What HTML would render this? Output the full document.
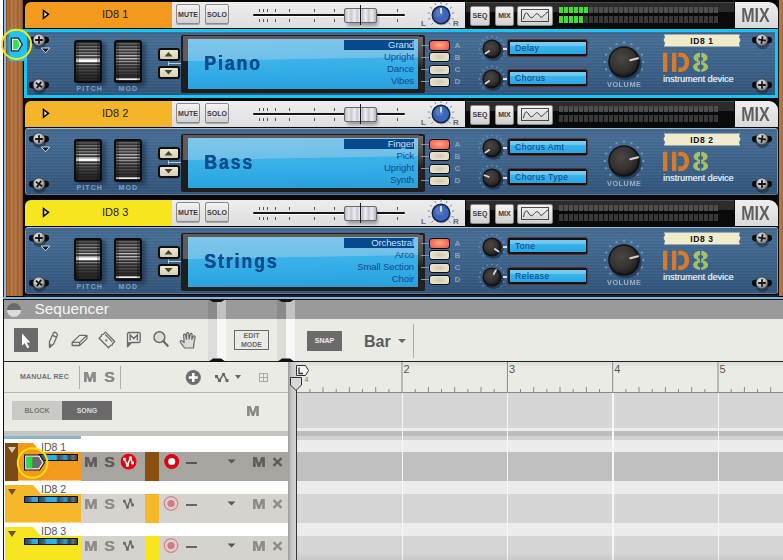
<!DOCTYPE html><html><head><meta charset="utf-8"><style>
*{margin:0;padding:0;box-sizing:border-box}
html,body{width:783px;height:560px;overflow:hidden;background:#000;font-family:"Liberation Sans",sans-serif}
.ab{position:absolute}
#root{position:relative;width:783px;height:560px;overflow:hidden;background:#070707}
.wood{background:linear-gradient(90deg,#8a5026 0%,#b07040 12%,#9c5e30 22%,#c08050 34%,#a46634 46%,#bc7c4a 58%,#9a5c2e 70%,#b87848 82%,#a06232 92%,#7a4622 100%)}
.tab{left:25px;width:147px;height:26px;border-radius:6px 0 0 0}
.tname{font-size:11px;color:#1c1c1c;left:102px;line-height:13px}
.gray{left:172px;width:293px;height:26px;background:linear-gradient(#eeeeee,#dedede)}
.btn{background:linear-gradient(#f4f4f4,#d0d0d0);border:1px solid #8a8a8a;border-radius:2px;font-size:7px;font-weight:bold;color:#3a3a3a;text-align:center;line-height:19.5px;box-shadow:0 1px 0 rgba(0,0,0,0.25)}
.dark{left:465px;width:270px;height:26px;background:#0a0a0a}
.mixtab{left:735px;width:43px;height:26px;background:linear-gradient(#eeeeee,#dadada);border-radius:0 9px 0 0}
.mixt{left:-1px;top:0;width:43px;font-size:20px;font-weight:bold;color:#5e5e5e;text-align:center;line-height:27px;transform:scaleX(0.8);transform-origin:21.5px 0}
.panel{left:25px;width:753px;background:linear-gradient(#42678d,#476d94 12%,#3e638a 50%,#33557a)}
.stripes{background:repeating-linear-gradient(180deg,rgba(255,255,255,0.03) 0 1px,rgba(0,0,0,0.045) 1px 2px,rgba(255,255,255,0.0) 2px 3px)}
.wlbl{font-size:7px;font-weight:bold;color:#78a2c4;letter-spacing:1.1px;line-height:8px}
.ud{width:22px;height:13px;background:linear-gradient(#eee8d2,#d8d0b6);border:2px solid #0e0e0e;border-radius:3px}
.lcdframe{background:#1e1e1e;border-radius:2px}
.lcd{background:linear-gradient(179deg,#80c6ea 0%,#6ec0e8 40%,#3cb2ea 41.5%,#2ea8e2 80%,#2a9ed8 100%)}
.pname{font-size:19.5px;font-weight:bold;color:#0c4c8c;letter-spacing:2.2px;text-shadow:0.7px 0 0 #0c4c8c;line-height:22px;transform:scaleX(0.9);transform-origin:0 0}
.plist{font-size:9.5px;color:#0e4a8e;text-align:right;line-height:12px;letter-spacing:-0.1px}
.abtn{width:20.5px;height:12px;background:radial-gradient(ellipse at 50% 50%,#cfc8b0,#e4dec8 60%,#ece6d2);border:1.6px solid #0e0e0e;border-radius:3px}
.albl{font-size:8px;font-weight:bold;color:#8aa2ba;line-height:9px}
.pdisp{width:81px;height:17.5px;background:#161010;border-radius:3px;border:1px solid #5a3432}
.pdin{left:2px;top:2px;width:75.5px;height:12px;background:linear-gradient(#7ccdf0,#6cc6ee 30%,#3ab4ec 34%,#2aa8e4);font-size:8.6px;color:#0a3c84;line-height:12px;padding-left:5px;letter-spacing:0.45px}
.tape{width:77px;height:12.5px;background:#efebcc}
.idev{font-size:9px;color:#d8e2ec;line-height:11px;letter-spacing:0;text-shadow:0.3px 0 0 #d8e2ec}
.trkM{font-size:14.3px;font-weight:bold;line-height:14px;text-shadow:0.4px 0 0 currentColor;transform:scaleX(1.12);transform-origin:0 0}
</style></head><body><div id="root">
<div class="ab" style="left:0;top:0;width:3px;height:560px;background:#fff"></div>
<div class="ab" style="left:3px;top:0;width:1px;height:298px;background:#1a2a44"></div>
<div class="ab" style="left:4px;top:0;width:2px;height:298px;background:#8db6da"></div>
<div class="ab wood" style="left:6px;top:0;width:17px;height:296px"></div>
<div class="ab" style="left:777px;top:0;width:2px;height:296px;background:#111"></div>
<div class="ab wood" style="left:779px;top:0;width:4px;height:296px"></div>
<div class="ab tab" style="top:2px;background:linear-gradient(#f39a1e,#f39a1e)"></div>
<svg class="ab" style="left:41px;top:8px" width="10" height="13"><path d="M2.5 2.5 L7.5 6.3 L2.5 10.3 Z" fill="#e8dcc8" stroke="#000" stroke-width="1.5" stroke-linejoin="miter"/></svg>
<div class="ab tname" style="top:8px">ID8 1</div>
<div class="ab gray" style="top:2px"></div>
<div class="ab btn" style="left:176px;top:4px;width:24px;height:20px">MUTE</div>
<div class="ab btn" style="left:205px;top:4px;width:24px;height:20px">SOLO</div>
<div class="ab" style="left:253px;top:14px;width:152px;height:2px;background:#161616;border-radius:1px"></div>
<div class="ab" style="left:254px;top:16px;width:151px;height:1px;background:#fff"></div>
<svg class="ab" style="left:253px;top:9px" width="160" height="14"><rect x="6.0" y="0" width="1" height="3" fill="#555"/><rect x="6.0" y="10" width="1" height="3" fill="#555"/><rect x="10.0" y="0" width="1" height="3" fill="#555"/><rect x="10.0" y="10" width="1" height="3" fill="#555"/><rect x="14.0" y="0" width="1" height="3" fill="#555"/><rect x="14.0" y="10" width="1" height="3" fill="#555"/><rect x="22.0" y="0" width="1" height="3" fill="#555"/><rect x="22.0" y="10" width="1" height="3" fill="#555"/><rect x="36.0" y="0" width="1" height="3" fill="#555"/><rect x="36.0" y="10" width="1" height="3" fill="#555"/><rect x="61.0" y="0" width="1" height="3" fill="#555"/><rect x="61.0" y="10" width="1" height="3" fill="#555"/><rect x="81.0" y="0" width="1" height="3" fill="#555"/><rect x="81.0" y="10" width="1" height="3" fill="#555"/><rect x="144.0" y="0" width="1" height="3" fill="#555"/><rect x="144.0" y="10" width="1" height="3" fill="#555"/></svg>
<div class="ab" style="left:347px;top:11px;width:31px;height:15px;background:rgba(0,0,0,0.3);filter:blur(1.5px);border-radius:3px"></div>
<div class="ab" style="left:344px;top:8px;width:33px;height:15px;border:1px solid #6a6a70;border-radius:2px;background:linear-gradient(90deg,#b8bac4,#e8e8ee 12%,#c4c6ce 20%,#f0f0f4 30%,#c8cad2 40%,#eeeef2 48%,#c0c2ca 56%,#f0f0f4 66%,#c6c8d0 76%,#ececf0 86%,#b4b6c0)"></div>
<div class="ab" style="left:360px;top:5px;width:1px;height:20px;background:#1a1a1a"></div>
<svg class="ab" style="left:426.5px;top:0.7px" width="28" height="28"><line x1="6.22" y1="21.78" x2="4.45" y2="23.55" stroke="#8a8a8a" stroke-width="1"/><line x1="3.54" y1="17.40" x2="1.16" y2="18.17" stroke="#8a8a8a" stroke-width="1"/><line x1="3.14" y1="12.28" x2="0.67" y2="11.89" stroke="#8a8a8a" stroke-width="1"/><line x1="5.10" y1="7.53" x2="3.08" y2="6.06" stroke="#8a8a8a" stroke-width="1"/><line x1="9.01" y1="4.20" x2="7.87" y2="1.97" stroke="#8a8a8a" stroke-width="1"/><line x1="14.00" y1="3.00" x2="14.00" y2="0.50" stroke="#8a8a8a" stroke-width="1"/><line x1="18.99" y1="4.20" x2="20.13" y2="1.97" stroke="#8a8a8a" stroke-width="1"/><line x1="22.90" y1="7.53" x2="24.92" y2="6.06" stroke="#8a8a8a" stroke-width="1"/><line x1="24.86" y1="12.28" x2="27.33" y2="11.89" stroke="#8a8a8a" stroke-width="1"/><line x1="24.46" y1="17.40" x2="26.84" y2="18.17" stroke="#8a8a8a" stroke-width="1"/><line x1="21.78" y1="21.78" x2="23.55" y2="23.55" stroke="#8a8a8a" stroke-width="1"/><circle cx="15" cy="15.5" r="9" fill="rgba(0,0,0,0.18)"/><circle cx="14" cy="14" r="8.7" fill="#3c66bc" stroke="#142448" stroke-width="1.5"/><circle cx="12.5" cy="12" r="4" fill="rgba(255,255,255,0.12)"/><line x1="14" y1="7" x2="14" y2="12.5" stroke="#f4f4f4" stroke-width="1.6"/></svg>
<div class="ab" style="left:421px;top:19px;font-size:8px;font-weight:bold;color:#666;line-height:9px">L</div>
<div class="ab" style="left:453px;top:19px;font-size:8px;font-weight:bold;color:#666;line-height:9px">R</div>
<div class="ab dark" style="top:2px"></div>
<div class="ab" style="left:466px;top:2px;width:268px;height:1px;background:#4a4a4a"></div>
<div class="ab" style="left:466px;top:3px;width:268px;height:9px;background:#2c2c2c"></div>
<div class="ab btn" style="left:470px;top:6px;width:20px;height:19.5px;line-height:18px">SEQ</div>
<div class="ab btn" style="left:495px;top:6px;width:19px;height:19.5px;line-height:18px">MIX</div>
<div class="ab btn" style="left:517px;top:6px;width:36px;height:20px"></div>
<svg class="ab" style="left:521px;top:9px" width="28" height="13"><rect x="0.5" y="0.5" width="27" height="12" fill="none" stroke="#4a4a4a"/><path d="M2.5 10 C4 3,5.5 2.5,7.5 6 S11 9.5,13.5 6.5 S17 4.5,19 7.5 S24 4,27 3" fill="none" stroke="#333" stroke-width="1"/></svg>
<svg class="ab" style="left:559px;top:7px" width="160" height="16"><rect x="0" y="0" width="4" height="6" fill="#3ee02c"/><rect x="0" y="9" width="4" height="7" fill="#3ee02c"/><rect x="5" y="0" width="4" height="6" fill="#3ee02c"/><rect x="5" y="9" width="4" height="7" fill="#3ee02c"/><rect x="10" y="0" width="4" height="6" fill="#3ee02c"/><rect x="10" y="9" width="4" height="7" fill="#3ee02c"/><rect x="15" y="0" width="4" height="6" fill="#3ee02c"/><rect x="15" y="9" width="4" height="7" fill="#3ee02c"/><rect x="20" y="0" width="4" height="6" fill="#3ee02c"/><rect x="20" y="9" width="4" height="7" fill="#3ee02c"/><rect x="25" y="0" width="4" height="6" fill="#3ee02c"/><rect x="25" y="9" width="4" height="7" fill="#383838"/><rect x="30" y="0" width="4" height="6" fill="#4e4e4e"/><rect x="30" y="9" width="4" height="7" fill="#383838"/><rect x="35" y="0" width="4" height="6" fill="#4e4e4e"/><rect x="35" y="9" width="4" height="7" fill="#383838"/><rect x="40" y="0" width="4" height="6" fill="#4e4e4e"/><rect x="40" y="9" width="4" height="7" fill="#383838"/><rect x="45" y="0" width="4" height="6" fill="#4e4e4e"/><rect x="45" y="9" width="4" height="7" fill="#383838"/><rect x="50" y="0" width="4" height="6" fill="#4e4e4e"/><rect x="50" y="9" width="4" height="7" fill="#383838"/><rect x="55" y="0" width="4" height="6" fill="#4e4e4e"/><rect x="55" y="9" width="4" height="7" fill="#383838"/><rect x="60" y="0" width="4" height="6" fill="#4e4e4e"/><rect x="60" y="9" width="4" height="7" fill="#383838"/><rect x="65" y="0" width="4" height="6" fill="#4e4e4e"/><rect x="65" y="9" width="4" height="7" fill="#383838"/><rect x="70" y="0" width="4" height="6" fill="#4e4e4e"/><rect x="70" y="9" width="4" height="7" fill="#383838"/><rect x="75" y="0" width="4" height="6" fill="#4e4e4e"/><rect x="75" y="9" width="4" height="7" fill="#383838"/><rect x="80" y="0" width="4" height="6" fill="#4e4e4e"/><rect x="80" y="9" width="4" height="7" fill="#383838"/><rect x="85" y="0" width="4" height="6" fill="#4e4e4e"/><rect x="85" y="9" width="4" height="7" fill="#383838"/><rect x="90" y="0" width="4" height="6" fill="#4e4e4e"/><rect x="90" y="9" width="4" height="7" fill="#383838"/><rect x="95" y="0" width="4" height="6" fill="#4e4e4e"/><rect x="95" y="9" width="4" height="7" fill="#383838"/><rect x="100" y="0" width="4" height="6" fill="#4e4e4e"/><rect x="100" y="9" width="4" height="7" fill="#383838"/><rect x="105" y="0" width="4" height="6" fill="#4e4e4e"/><rect x="105" y="9" width="4" height="7" fill="#383838"/><rect x="110" y="0" width="4" height="6" fill="#4e4e4e"/><rect x="110" y="9" width="4" height="7" fill="#383838"/><rect x="115" y="0" width="4" height="6" fill="#4e4e4e"/><rect x="115" y="9" width="4" height="7" fill="#383838"/><rect x="120" y="0" width="4" height="6" fill="#4e4e4e"/><rect x="120" y="9" width="4" height="7" fill="#383838"/><rect x="125" y="0" width="4" height="6" fill="#4e4e4e"/><rect x="125" y="9" width="4" height="7" fill="#383838"/><rect x="130" y="0" width="4" height="6" fill="#4e4e4e"/><rect x="130" y="9" width="4" height="7" fill="#383838"/><rect x="135" y="0" width="4" height="6" fill="#4e4e4e"/><rect x="135" y="9" width="4" height="7" fill="#383838"/><rect x="140" y="0" width="4" height="6" fill="#4e4e4e"/><rect x="140" y="9" width="4" height="7" fill="#383838"/><rect x="145" y="0" width="4" height="6" fill="#4e4e4e"/><rect x="145" y="9" width="4" height="7" fill="#383838"/><rect x="150" y="0" width="4" height="6" fill="#4e4e4e"/><rect x="150" y="9" width="4" height="7" fill="#383838"/><rect x="155" y="0" width="4" height="6" fill="#4e4e4e"/><rect x="155" y="9" width="4" height="7" fill="#383838"/></svg>
<div class="ab mixtab" style="top:2px"><div class="ab mixt">MIX</div></div>
<div class="ab panel" style="left:24px;top:29px;width:754px;height:69px;border:3px solid #16c6f4"></div>
<div class="ab stripes" style="left:27px;top:32px;width:748px;height:63px"></div>
<svg class="ab" style="left:28px;top:31px" width="22" height="20"><defs><radialGradient id="sg" cx="0.42" cy="0.38" r="0.65"><stop offset="0" stop-color="#f0f0f0"/><stop offset="0.55" stop-color="#b8b8b8"/><stop offset="1" stop-color="#606060"/></radialGradient></defs><ellipse cx="11.5" cy="12.5" rx="6.5" ry="5.5" fill="rgba(15,30,45,0.45)"/><rect x="1" y="5.8" width="20" height="6.6" rx="3.3" fill="#0c0c0c"/><circle cx="11" cy="9" r="6" fill="url(#sg)" stroke="#2a2a2a" stroke-width="0.6"/><g transform="rotate(0 11 9)"><path d="M11 5.2V12.8M7.2 9H14.8" stroke="#161616" stroke-width="1.8"/></g></svg>
<svg class="ab" style="left:28px;top:76px" width="22" height="20"><defs><radialGradient id="sg" cx="0.42" cy="0.38" r="0.65"><stop offset="0" stop-color="#f0f0f0"/><stop offset="0.55" stop-color="#b8b8b8"/><stop offset="1" stop-color="#606060"/></radialGradient></defs><ellipse cx="11.5" cy="12.5" rx="6.5" ry="5.5" fill="rgba(15,30,45,0.45)"/><rect x="1" y="5.8" width="20" height="6.6" rx="3.3" fill="#0c0c0c"/><circle cx="11" cy="9" r="6" fill="url(#sg)" stroke="#2a2a2a" stroke-width="0.6"/><g transform="rotate(35 11 9)"><path d="M11 5.2V12.8M7.2 9H14.8" stroke="#161616" stroke-width="1.8"/></g></svg>
<svg class="ab" style="left:751px;top:31px" width="22" height="20"><defs><radialGradient id="sg" cx="0.42" cy="0.38" r="0.65"><stop offset="0" stop-color="#f0f0f0"/><stop offset="0.55" stop-color="#b8b8b8"/><stop offset="1" stop-color="#606060"/></radialGradient></defs><ellipse cx="11.5" cy="12.5" rx="6.5" ry="5.5" fill="rgba(15,30,45,0.45)"/><rect x="1" y="5.8" width="20" height="6.6" rx="3.3" fill="#0c0c0c"/><circle cx="11" cy="9" r="6" fill="url(#sg)" stroke="#2a2a2a" stroke-width="0.6"/><g transform="rotate(10 11 9)"><path d="M11 5.2V12.8M7.2 9H14.8" stroke="#161616" stroke-width="1.8"/></g></svg>
<svg class="ab" style="left:751px;top:76px" width="22" height="20"><defs><radialGradient id="sg" cx="0.42" cy="0.38" r="0.65"><stop offset="0" stop-color="#f0f0f0"/><stop offset="0.55" stop-color="#b8b8b8"/><stop offset="1" stop-color="#606060"/></radialGradient></defs><ellipse cx="11.5" cy="12.5" rx="6.5" ry="5.5" fill="rgba(15,30,45,0.45)"/><rect x="1" y="5.8" width="20" height="6.6" rx="3.3" fill="#0c0c0c"/><circle cx="11" cy="9" r="6" fill="url(#sg)" stroke="#2a2a2a" stroke-width="0.6"/><g transform="rotate(0 11 9)"><path d="M11 5.2V12.8M7.2 9H14.8" stroke="#161616" stroke-width="1.8"/></g></svg>
<svg class="ab" style="left:40px;top:47px" width="11" height="7"><path d="M1.2 1H9.8L5.5 5.8Z" fill="#0e1a26" stroke="#dfe8f0" stroke-width="0.9"/></svg>
<div class="ab" style="left:77px;top:42px;width:29px;height:44px;background:rgba(10,25,45,0.45);filter:blur(2px);border-radius:3px"></div>
<svg class="ab" style="left:74px;top:40px" width="28" height="43"><rect x="0" y="0" width="28" height="43" rx="3" fill="#0c0c0c"/><rect x="2" y="2" width="24" height="1" fill="rgb(43,43,43)"/><rect x="2" y="3" width="24" height="1" fill="rgb(79,79,79)"/><rect x="2" y="4" width="24" height="1" fill="rgb(72,72,72)"/><rect x="2" y="5" width="24" height="1" fill="rgb(45,45,45)"/><rect x="2" y="6" width="24" height="1" fill="rgb(116,116,116)"/><rect x="2" y="7" width="24" height="1" fill="rgb(77,77,77)"/><rect x="2" y="8" width="24" height="1" fill="rgb(49,49,49)"/><rect x="2" y="9" width="24" height="1" fill="rgb(135,135,135)"/><rect x="2" y="10" width="24" height="1" fill="rgb(75,75,75)"/><rect x="2" y="11" width="24" height="1" fill="rgb(59,59,59)"/><rect x="2" y="12" width="24" height="1" fill="rgb(120,120,120)"/><rect x="2" y="13" width="24" height="1" fill="rgb(82,82,82)"/><rect x="2" y="14" width="24" height="1" fill="rgb(61,61,61)"/><rect x="2" y="15" width="24" height="1" fill="rgb(181,181,181)"/><rect x="2" y="16" width="24" height="1" fill="rgb(85,85,85)"/><rect x="2" y="17" width="24" height="1" fill="rgb(57,57,57)"/><rect x="2" y="18" width="24" height="1" fill="rgb(161,161,161)"/><rect x="2" y="19" width="24" height="1" fill="rgb(113,113,113)"/><rect x="2" y="20" width="24" height="1" fill="rgb(61,61,61)"/><rect x="2" y="21" width="24" height="1" fill="rgb(132,132,132)"/><rect x="2" y="22" width="24" height="1" fill="rgb(103,103,103)"/><rect x="2" y="23" width="24" height="1" fill="rgb(49,49,49)"/><rect x="2" y="24" width="24" height="1" fill="rgb(137,137,137)"/><rect x="2" y="25" width="24" height="1" fill="rgb(70,70,70)"/><rect x="2" y="26" width="24" height="1" fill="rgb(46,46,46)"/><rect x="2" y="27" width="24" height="1" fill="rgb(81,81,81)"/><rect x="2" y="28" width="24" height="1" fill="rgb(60,60,60)"/><rect x="2" y="29" width="24" height="1" fill="rgb(47,47,47)"/><rect x="2" y="30" width="24" height="1" fill="rgb(67,67,67)"/><rect x="2" y="31" width="24" height="1" fill="rgb(54,54,54)"/><rect x="2" y="32" width="24" height="1" fill="rgb(40,40,40)"/><rect x="2" y="33" width="24" height="1" fill="rgb(57,57,57)"/><rect x="2" y="34" width="24" height="1" fill="rgb(45,45,45)"/><rect x="2" y="35" width="24" height="1" fill="rgb(35,35,35)"/><rect x="2" y="36" width="24" height="1" fill="rgb(43,43,43)"/><rect x="2" y="37" width="24" height="1" fill="rgb(37,37,37)"/><rect x="2" y="38" width="24" height="1" fill="rgb(34,34,34)"/><rect x="2" y="39" width="24" height="1" fill="rgb(40,40,40)"/><rect x="2" y="40" width="24" height="1" fill="rgb(35,35,35)"/><rect x="2" y="19.3" width="24" height="2.7" fill="#fafafa"/><rect x="2" y="2" width="3" height="39" fill="rgba(0,0,0,0.25)"/><rect x="23" y="2" width="3" height="39" fill="rgba(0,0,0,0.25)"/></svg>
<div class="ab" style="left:117px;top:42px;width:29px;height:44px;background:rgba(10,25,45,0.45);filter:blur(2px);border-radius:3px"></div>
<svg class="ab" style="left:114px;top:40px" width="28" height="43"><rect x="0" y="0" width="28" height="43" rx="3" fill="#0c0c0c"/><rect x="2" y="2" width="24" height="1" fill="rgb(44,44,44)"/><rect x="2" y="3" width="24" height="1" fill="rgb(94,94,94)"/><rect x="2" y="4" width="24" height="1" fill="rgb(78,78,78)"/><rect x="2" y="5" width="24" height="1" fill="rgb(50,50,50)"/><rect x="2" y="6" width="24" height="1" fill="rgb(114,114,114)"/><rect x="2" y="7" width="24" height="1" fill="rgb(83,83,83)"/><rect x="2" y="8" width="24" height="1" fill="rgb(51,51,51)"/><rect x="2" y="9" width="24" height="1" fill="rgb(136,136,136)"/><rect x="2" y="10" width="24" height="1" fill="rgb(96,96,96)"/><rect x="2" y="11" width="24" height="1" fill="rgb(65,65,65)"/><rect x="2" y="12" width="24" height="1" fill="rgb(121,121,121)"/><rect x="2" y="13" width="24" height="1" fill="rgb(91,91,91)"/><rect x="2" y="14" width="24" height="1" fill="rgb(55,55,55)"/><rect x="2" y="15" width="24" height="1" fill="rgb(180,180,180)"/><rect x="2" y="16" width="24" height="1" fill="rgb(108,108,108)"/><rect x="2" y="17" width="24" height="1" fill="rgb(54,54,54)"/><rect x="2" y="18" width="24" height="1" fill="rgb(187,187,187)"/><rect x="2" y="19" width="24" height="1" fill="rgb(114,114,114)"/><rect x="2" y="20" width="24" height="1" fill="rgb(62,62,62)"/><rect x="2" y="21" width="24" height="1" fill="rgb(146,146,146)"/><rect x="2" y="22" width="24" height="1" fill="rgb(76,76,76)"/><rect x="2" y="23" width="24" height="1" fill="rgb(48,48,48)"/><rect x="2" y="24" width="24" height="1" fill="rgb(120,120,120)"/><rect x="2" y="25" width="24" height="1" fill="rgb(64,64,64)"/><rect x="2" y="26" width="24" height="1" fill="rgb(46,46,46)"/><rect x="2" y="27" width="24" height="1" fill="rgb(86,86,86)"/><rect x="2" y="28" width="24" height="1" fill="rgb(54,54,54)"/><rect x="2" y="29" width="24" height="1" fill="rgb(44,44,44)"/><rect x="2" y="30" width="24" height="1" fill="rgb(74,74,74)"/><rect x="2" y="31" width="24" height="1" fill="rgb(57,57,57)"/><rect x="2" y="32" width="24" height="1" fill="rgb(40,40,40)"/><rect x="2" y="33" width="24" height="1" fill="rgb(62,62,62)"/><rect x="2" y="34" width="24" height="1" fill="rgb(44,44,44)"/><rect x="2" y="35" width="24" height="1" fill="rgb(37,37,37)"/><rect x="2" y="36" width="24" height="1" fill="rgb(47,47,47)"/><rect x="2" y="37" width="24" height="1" fill="rgb(38,38,38)"/><rect x="2" y="38" width="24" height="1" fill="rgb(35,35,35)"/><rect x="2" y="39" width="24" height="1" fill="rgb(42,42,42)"/><rect x="2" y="40" width="24" height="1" fill="rgb(36,36,36)"/><rect x="2" y="38.3" width="24" height="1.7" fill="#eeeeee"/><rect x="2" y="2" width="3" height="39" fill="rgba(0,0,0,0.25)"/><rect x="23" y="2" width="3" height="39" fill="rgba(0,0,0,0.25)"/></svg>
<div class="ab wlbl" style="left:76.5px;top:85px">PITCH</div>
<div class="ab wlbl" style="left:118.5px;top:85px">MOD</div>
<div class="ab ud" style="left:157.5px;top:47.5px"></div>
<div class="ab ud" style="left:157.5px;top:65.5px"></div>
<svg class="ab" style="left:157px;top:47px" width="26" height="33"><path d="M7.5 9.5H15.5L11.5 5Z" fill="#4a4232"/><path d="M7.5 23H15.5L11.5 27.5Z" fill="#4a4232"/><path d="M11.5 14.5V18.5M11.5 16.5H25" stroke="#b8cce0" stroke-width="1"/></svg>
<div class="ab lcdframe" style="left:181px;top:34.5px;width:244px;height:58px"></div>
<div class="ab" style="left:182.5px;top:36px;width:236px;height:25px;background:#625a56"></div>
<div class="ab" style="left:418px;top:37px;width:5px;height:53px;background:linear-gradient(180deg,#6a6a6a,#444 40%,#222 60%)"></div>
<div class="ab lcd" style="left:188px;top:39px;width:230px;height:50px"></div>
<div class="ab pname" style="left:204px;top:51.5px">Piano</div>
<div class="ab" style="left:344px;top:40px;width:70px;height:10px;background:#08488e"></div>
<div class="ab plist" style="left:234px;width:180px;top:39.3px;color:#c4e2fc">Grand</div>
<div class="ab plist" style="left:234px;width:180px;top:51.25px;color:#0e4a8e">Upright</div>
<div class="ab plist" style="left:234px;width:180px;top:63.199999999999996px;color:#0e4a8e">Dance</div>
<div class="ab plist" style="left:234px;width:180px;top:75.14999999999999px;color:#0e4a8e">Vibes</div>
<div class="ab" style="left:421px;top:44.6px;width:8px;height:1px;background:#8a96a4"></div>
<div class="ab abtn" style="left:429px;top:39.5px;height:11.3px;background:radial-gradient(ellipse at 50% 45%,#ffb878 0,#ff8a70 30%,#f06a5a 70%,#d85848);"></div>
<div class="ab albl" style="left:454.5px;top:40.9px">A</div>
<div class="ab" style="left:421px;top:56.9px;width:8px;height:1px;background:#8a96a4"></div>
<div class="ab abtn" style="left:429px;top:52.3px;height:10.2px;"></div>
<div class="ab albl" style="left:454.5px;top:53.1px">B</div>
<div class="ab" style="left:421px;top:69.2px;width:8px;height:1px;background:#8a96a4"></div>
<div class="ab abtn" style="left:429px;top:64.6px;height:10.2px;"></div>
<div class="ab albl" style="left:454.5px;top:65.4px">C</div>
<div class="ab" style="left:421px;top:81.2px;width:8px;height:1px;background:#8a96a4"></div>
<div class="ab abtn" style="left:429px;top:76.6px;height:10.2px;"></div>
<div class="ab albl" style="left:454.5px;top:77.4px">D</div>
<svg class="ab" style="left:477.00px;top:33.60px" width="30" height="30"><defs><radialGradient id="kg" cx="0.42" cy="0.38" r="0.6"><stop offset="0" stop-color="#4a4642"/><stop offset="0.7" stop-color="#363230"/><stop offset="1" stop-color="#242220"/></radialGradient></defs><rect x="5.34" y="23.16" width="1.5" height="1.5" fill="#6690b8"/><rect x="2.61" y="19.07" width="1.5" height="1.5" fill="#6690b8"/><rect x="1.65" y="14.25" width="1.5" height="1.5" fill="#6690b8"/><rect x="2.61" y="9.43" width="1.5" height="1.5" fill="#6690b8"/><rect x="5.34" y="5.34" width="1.5" height="1.5" fill="#6690b8"/><rect x="9.43" y="2.61" width="1.5" height="1.5" fill="#6690b8"/><rect x="14.25" y="1.65" width="1.5" height="1.5" fill="#6690b8"/><rect x="19.07" y="2.61" width="1.5" height="1.5" fill="#6690b8"/><rect x="23.16" y="5.34" width="1.5" height="1.5" fill="#6690b8"/><rect x="25.89" y="9.43" width="1.5" height="1.5" fill="#6690b8"/><rect x="26.85" y="14.25" width="1.5" height="1.5" fill="#6690b8"/><rect x="25.89" y="19.07" width="1.5" height="1.5" fill="#6690b8"/><rect x="23.16" y="23.16" width="1.5" height="1.5" fill="#6690b8"/><circle cx="16.5" cy="17.0" r="10.1" fill="rgba(10,25,40,0.45)"/><circle cx="15.0" cy="15.0" r="9.6" fill="#121212"/><circle cx="14.7" cy="14.7" r="7.8" fill="url(#kg)"/><line x1="12.13" y1="17.01" x2="8.45" y2="19.59" stroke="#d4d4d4" stroke-width="1.8" stroke-linecap="round"/></svg>
<div class="ab" style="left:503px;top:48.1px;width:4px;height:1.5px;background:#dde"></div>
<div class="ab pdisp" style="left:507px;top:39px"><div class="ab pdin">Delay</div></div>
<svg class="ab" style="left:477.00px;top:63.50px" width="30" height="30"><defs><radialGradient id="kg" cx="0.42" cy="0.38" r="0.6"><stop offset="0" stop-color="#4a4642"/><stop offset="0.7" stop-color="#363230"/><stop offset="1" stop-color="#242220"/></radialGradient></defs><rect x="5.34" y="23.16" width="1.5" height="1.5" fill="#6690b8"/><rect x="2.61" y="19.07" width="1.5" height="1.5" fill="#6690b8"/><rect x="1.65" y="14.25" width="1.5" height="1.5" fill="#6690b8"/><rect x="2.61" y="9.43" width="1.5" height="1.5" fill="#6690b8"/><rect x="5.34" y="5.34" width="1.5" height="1.5" fill="#6690b8"/><rect x="9.43" y="2.61" width="1.5" height="1.5" fill="#6690b8"/><rect x="14.25" y="1.65" width="1.5" height="1.5" fill="#6690b8"/><rect x="19.07" y="2.61" width="1.5" height="1.5" fill="#6690b8"/><rect x="23.16" y="5.34" width="1.5" height="1.5" fill="#6690b8"/><rect x="25.89" y="9.43" width="1.5" height="1.5" fill="#6690b8"/><rect x="26.85" y="14.25" width="1.5" height="1.5" fill="#6690b8"/><rect x="25.89" y="19.07" width="1.5" height="1.5" fill="#6690b8"/><rect x="23.16" y="23.16" width="1.5" height="1.5" fill="#6690b8"/><circle cx="16.5" cy="17.0" r="10.1" fill="rgba(10,25,40,0.45)"/><circle cx="15.0" cy="15.0" r="9.6" fill="#121212"/><circle cx="14.7" cy="14.7" r="7.8" fill="url(#kg)"/><line x1="12.13" y1="17.01" x2="8.45" y2="19.59" stroke="#d4d4d4" stroke-width="1.8" stroke-linecap="round"/></svg>
<div class="ab" style="left:503px;top:78.0px;width:4px;height:1.5px;background:#dde"></div>
<div class="ab pdisp" style="left:507px;top:69px"><div class="ab pdin">Chorus</div></div>
<svg class="ab" style="left:601.20px;top:39.00px" width="46" height="46"><defs><radialGradient id="kg" cx="0.42" cy="0.38" r="0.6"><stop offset="0" stop-color="#4a4642"/><stop offset="0.7" stop-color="#363230"/><stop offset="1" stop-color="#242220"/></radialGradient></defs><rect x="8.35" y="35.65" width="2" height="2" fill="#6a9cc4"/><rect x="4.17" y="29.39" width="2" height="2" fill="#6a9cc4"/><rect x="2.70" y="22.00" width="2" height="2" fill="#6a9cc4"/><rect x="4.17" y="14.61" width="2" height="2" fill="#6a9cc4"/><rect x="8.35" y="8.35" width="2" height="2" fill="#6a9cc4"/><rect x="14.61" y="4.17" width="2" height="2" fill="#6a9cc4"/><rect x="22.00" y="2.70" width="2" height="2" fill="#6a9cc4"/><rect x="29.39" y="4.17" width="2" height="2" fill="#6a9cc4"/><rect x="35.65" y="8.35" width="2" height="2" fill="#6a9cc4"/><rect x="39.83" y="14.61" width="2" height="2" fill="#6a9cc4"/><rect x="41.30" y="22.00" width="2" height="2" fill="#6a9cc4"/><rect x="39.83" y="29.39" width="2" height="2" fill="#6a9cc4"/><rect x="35.65" y="35.65" width="2" height="2" fill="#6a9cc4"/><circle cx="24.5" cy="25.0" r="16.3" fill="rgba(10,25,40,0.45)"/><circle cx="23.0" cy="23.0" r="15.8" fill="#121212"/><circle cx="22.7" cy="22.7" r="14.0" fill="url(#kg)"/><line x1="29.28" y1="21.32" x2="37.01" y2="19.25" stroke="#d4d4d4" stroke-width="2" stroke-linecap="round"/></svg>
<div class="ab" style="left:607px;top:80.5px;font-size:7.5px;font-weight:bold;color:#9ab0c6;letter-spacing:0.5px;line-height:8px;transform:scaleX(0.98);transform-origin:0 0">VOLUME</div>
<svg class="ab" style="left:663px;top:34px" width="78" height="13"><path d="M1 0.5H77L76 3L77.5 6L76 9.5L77 12.5H1L2 9L0.5 6L2 3Z" fill="#efebcb"/><text x="39" y="10" text-anchor="middle" font-family="Liberation Sans" font-weight="bold" font-size="8.5" fill="#111" letter-spacing="0.6">ID8 1</text></svg>
<svg class="ab" style="left:662px;top:52px" width="48" height="22"><rect x="1" y="0.7" width="4.3" height="19.2" fill="#d97a2a"/><rect x="10" y="0.7" width="4.3" height="19.2" fill="#d97a2a"/><path d="M16.3 0.7H19.5A7.7 9.6 0 0 1 19.5 19.9H16.3V15.6H19.3A3.4 5.3 0 0 0 19.3 5H16.3Z" fill="#d97a2a"/><path fill-rule="evenodd" d="M31.5 5.6A7.1 4.9 0 1 0 45.7 5.6A7.1 4.9 0 1 0 31.5 5.6Z M36 7A2.6 2.1 0 1 0 41.2 7A2.6 2.1 0 1 0 36 7Z" fill="#a6c064"/><path fill-rule="evenodd" d="M31.1 15A7.5 4.9 0 1 0 46.1 15A7.5 4.9 0 1 0 31.1 15Z M35.6 15A3 2.4 0 1 0 41.6 15A3 2.4 0 1 0 35.6 15Z" fill="#a6c064"/><rect x="38" y="0" width="1.2" height="21" fill="#3a5f86"/></svg>
<div class="ab idev" style="left:663px;top:73.5px">instrument device</div>
<div class="ab tab" style="top:101px;background:linear-gradient(#f5b52b,#f5b52b)"></div>
<svg class="ab" style="left:41px;top:107px" width="10" height="13"><path d="M2.5 2.5 L7.5 6.3 L2.5 10.3 Z" fill="#e8dcc8" stroke="#000" stroke-width="1.5" stroke-linejoin="miter"/></svg>
<div class="ab tname" style="top:107px">ID8 2</div>
<div class="ab gray" style="top:101px"></div>
<div class="ab btn" style="left:176px;top:103px;width:24px;height:20px">MUTE</div>
<div class="ab btn" style="left:205px;top:103px;width:24px;height:20px">SOLO</div>
<div class="ab" style="left:253px;top:113px;width:152px;height:2px;background:#161616;border-radius:1px"></div>
<div class="ab" style="left:254px;top:115px;width:151px;height:1px;background:#fff"></div>
<svg class="ab" style="left:253px;top:108px" width="160" height="14"><rect x="6.0" y="0" width="1" height="3" fill="#555"/><rect x="6.0" y="10" width="1" height="3" fill="#555"/><rect x="10.0" y="0" width="1" height="3" fill="#555"/><rect x="10.0" y="10" width="1" height="3" fill="#555"/><rect x="14.0" y="0" width="1" height="3" fill="#555"/><rect x="14.0" y="10" width="1" height="3" fill="#555"/><rect x="22.0" y="0" width="1" height="3" fill="#555"/><rect x="22.0" y="10" width="1" height="3" fill="#555"/><rect x="36.0" y="0" width="1" height="3" fill="#555"/><rect x="36.0" y="10" width="1" height="3" fill="#555"/><rect x="61.0" y="0" width="1" height="3" fill="#555"/><rect x="61.0" y="10" width="1" height="3" fill="#555"/><rect x="81.0" y="0" width="1" height="3" fill="#555"/><rect x="81.0" y="10" width="1" height="3" fill="#555"/><rect x="144.0" y="0" width="1" height="3" fill="#555"/><rect x="144.0" y="10" width="1" height="3" fill="#555"/></svg>
<div class="ab" style="left:347px;top:110px;width:31px;height:15px;background:rgba(0,0,0,0.3);filter:blur(1.5px);border-radius:3px"></div>
<div class="ab" style="left:344px;top:107px;width:33px;height:15px;border:1px solid #6a6a70;border-radius:2px;background:linear-gradient(90deg,#b8bac4,#e8e8ee 12%,#c4c6ce 20%,#f0f0f4 30%,#c8cad2 40%,#eeeef2 48%,#c0c2ca 56%,#f0f0f4 66%,#c6c8d0 76%,#ececf0 86%,#b4b6c0)"></div>
<div class="ab" style="left:360px;top:104px;width:1px;height:20px;background:#1a1a1a"></div>
<svg class="ab" style="left:426.5px;top:99.7px" width="28" height="28"><line x1="6.22" y1="21.78" x2="4.45" y2="23.55" stroke="#8a8a8a" stroke-width="1"/><line x1="3.54" y1="17.40" x2="1.16" y2="18.17" stroke="#8a8a8a" stroke-width="1"/><line x1="3.14" y1="12.28" x2="0.67" y2="11.89" stroke="#8a8a8a" stroke-width="1"/><line x1="5.10" y1="7.53" x2="3.08" y2="6.06" stroke="#8a8a8a" stroke-width="1"/><line x1="9.01" y1="4.20" x2="7.87" y2="1.97" stroke="#8a8a8a" stroke-width="1"/><line x1="14.00" y1="3.00" x2="14.00" y2="0.50" stroke="#8a8a8a" stroke-width="1"/><line x1="18.99" y1="4.20" x2="20.13" y2="1.97" stroke="#8a8a8a" stroke-width="1"/><line x1="22.90" y1="7.53" x2="24.92" y2="6.06" stroke="#8a8a8a" stroke-width="1"/><line x1="24.86" y1="12.28" x2="27.33" y2="11.89" stroke="#8a8a8a" stroke-width="1"/><line x1="24.46" y1="17.40" x2="26.84" y2="18.17" stroke="#8a8a8a" stroke-width="1"/><line x1="21.78" y1="21.78" x2="23.55" y2="23.55" stroke="#8a8a8a" stroke-width="1"/><circle cx="15" cy="15.5" r="9" fill="rgba(0,0,0,0.18)"/><circle cx="14" cy="14" r="8.7" fill="#3c66bc" stroke="#142448" stroke-width="1.5"/><circle cx="12.5" cy="12" r="4" fill="rgba(255,255,255,0.12)"/><line x1="14" y1="7" x2="14" y2="12.5" stroke="#f4f4f4" stroke-width="1.6"/></svg>
<div class="ab" style="left:421px;top:118px;font-size:8px;font-weight:bold;color:#666;line-height:9px">L</div>
<div class="ab" style="left:453px;top:118px;font-size:8px;font-weight:bold;color:#666;line-height:9px">R</div>
<div class="ab dark" style="top:101px"></div>
<div class="ab" style="left:466px;top:101px;width:268px;height:1px;background:#4a4a4a"></div>
<div class="ab" style="left:466px;top:102px;width:268px;height:9px;background:#2c2c2c"></div>
<div class="ab btn" style="left:470px;top:105px;width:20px;height:19.5px;line-height:18px">SEQ</div>
<div class="ab btn" style="left:495px;top:105px;width:19px;height:19.5px;line-height:18px">MIX</div>
<div class="ab btn" style="left:517px;top:105px;width:36px;height:20px"></div>
<svg class="ab" style="left:521px;top:108px" width="28" height="13"><rect x="0.5" y="0.5" width="27" height="12" fill="none" stroke="#4a4a4a"/><path d="M2.5 10 C4 3,5.5 2.5,7.5 6 S11 9.5,13.5 6.5 S17 4.5,19 7.5 S24 4,27 3" fill="none" stroke="#333" stroke-width="1"/></svg>
<svg class="ab" style="left:559px;top:106px" width="160" height="16"><rect x="0" y="0" width="4" height="6" fill="#4e4e4e"/><rect x="0" y="9" width="4" height="7" fill="#383838"/><rect x="5" y="0" width="4" height="6" fill="#4e4e4e"/><rect x="5" y="9" width="4" height="7" fill="#383838"/><rect x="10" y="0" width="4" height="6" fill="#4e4e4e"/><rect x="10" y="9" width="4" height="7" fill="#383838"/><rect x="15" y="0" width="4" height="6" fill="#4e4e4e"/><rect x="15" y="9" width="4" height="7" fill="#383838"/><rect x="20" y="0" width="4" height="6" fill="#4e4e4e"/><rect x="20" y="9" width="4" height="7" fill="#383838"/><rect x="25" y="0" width="4" height="6" fill="#4e4e4e"/><rect x="25" y="9" width="4" height="7" fill="#383838"/><rect x="30" y="0" width="4" height="6" fill="#4e4e4e"/><rect x="30" y="9" width="4" height="7" fill="#383838"/><rect x="35" y="0" width="4" height="6" fill="#4e4e4e"/><rect x="35" y="9" width="4" height="7" fill="#383838"/><rect x="40" y="0" width="4" height="6" fill="#4e4e4e"/><rect x="40" y="9" width="4" height="7" fill="#383838"/><rect x="45" y="0" width="4" height="6" fill="#4e4e4e"/><rect x="45" y="9" width="4" height="7" fill="#383838"/><rect x="50" y="0" width="4" height="6" fill="#4e4e4e"/><rect x="50" y="9" width="4" height="7" fill="#383838"/><rect x="55" y="0" width="4" height="6" fill="#4e4e4e"/><rect x="55" y="9" width="4" height="7" fill="#383838"/><rect x="60" y="0" width="4" height="6" fill="#4e4e4e"/><rect x="60" y="9" width="4" height="7" fill="#383838"/><rect x="65" y="0" width="4" height="6" fill="#4e4e4e"/><rect x="65" y="9" width="4" height="7" fill="#383838"/><rect x="70" y="0" width="4" height="6" fill="#4e4e4e"/><rect x="70" y="9" width="4" height="7" fill="#383838"/><rect x="75" y="0" width="4" height="6" fill="#4e4e4e"/><rect x="75" y="9" width="4" height="7" fill="#383838"/><rect x="80" y="0" width="4" height="6" fill="#4e4e4e"/><rect x="80" y="9" width="4" height="7" fill="#383838"/><rect x="85" y="0" width="4" height="6" fill="#4e4e4e"/><rect x="85" y="9" width="4" height="7" fill="#383838"/><rect x="90" y="0" width="4" height="6" fill="#4e4e4e"/><rect x="90" y="9" width="4" height="7" fill="#383838"/><rect x="95" y="0" width="4" height="6" fill="#4e4e4e"/><rect x="95" y="9" width="4" height="7" fill="#383838"/><rect x="100" y="0" width="4" height="6" fill="#4e4e4e"/><rect x="100" y="9" width="4" height="7" fill="#383838"/><rect x="105" y="0" width="4" height="6" fill="#4e4e4e"/><rect x="105" y="9" width="4" height="7" fill="#383838"/><rect x="110" y="0" width="4" height="6" fill="#4e4e4e"/><rect x="110" y="9" width="4" height="7" fill="#383838"/><rect x="115" y="0" width="4" height="6" fill="#4e4e4e"/><rect x="115" y="9" width="4" height="7" fill="#383838"/><rect x="120" y="0" width="4" height="6" fill="#4e4e4e"/><rect x="120" y="9" width="4" height="7" fill="#383838"/><rect x="125" y="0" width="4" height="6" fill="#4e4e4e"/><rect x="125" y="9" width="4" height="7" fill="#383838"/><rect x="130" y="0" width="4" height="6" fill="#4e4e4e"/><rect x="130" y="9" width="4" height="7" fill="#383838"/><rect x="135" y="0" width="4" height="6" fill="#4e4e4e"/><rect x="135" y="9" width="4" height="7" fill="#383838"/><rect x="140" y="0" width="4" height="6" fill="#4e4e4e"/><rect x="140" y="9" width="4" height="7" fill="#383838"/><rect x="145" y="0" width="4" height="6" fill="#4e4e4e"/><rect x="145" y="9" width="4" height="7" fill="#383838"/><rect x="150" y="0" width="4" height="6" fill="#4e4e4e"/><rect x="150" y="9" width="4" height="7" fill="#383838"/><rect x="155" y="0" width="4" height="6" fill="#4e4e4e"/><rect x="155" y="9" width="4" height="7" fill="#383838"/></svg>
<div class="ab mixtab" style="top:101px"><div class="ab mixt">MIX</div></div>
<div class="ab panel" style="top:128.3px;height:67.2px;border:1px solid #7894ac;border-top-color:#a4bacc;border-bottom-color:#62788e;border-radius:3px"></div>
<div class="ab stripes" style="left:26px;top:129.3px;width:751px;height:65.2px"></div>
<svg class="ab" style="left:28px;top:130px" width="22" height="20"><defs><radialGradient id="sg" cx="0.42" cy="0.38" r="0.65"><stop offset="0" stop-color="#f0f0f0"/><stop offset="0.55" stop-color="#b8b8b8"/><stop offset="1" stop-color="#606060"/></radialGradient></defs><ellipse cx="11.5" cy="12.5" rx="6.5" ry="5.5" fill="rgba(15,30,45,0.45)"/><rect x="1" y="5.8" width="20" height="6.6" rx="3.3" fill="#0c0c0c"/><circle cx="11" cy="9" r="6" fill="url(#sg)" stroke="#2a2a2a" stroke-width="0.6"/><g transform="rotate(0 11 9)"><path d="M11 5.2V12.8M7.2 9H14.8" stroke="#161616" stroke-width="1.8"/></g></svg>
<svg class="ab" style="left:28px;top:175px" width="22" height="20"><defs><radialGradient id="sg" cx="0.42" cy="0.38" r="0.65"><stop offset="0" stop-color="#f0f0f0"/><stop offset="0.55" stop-color="#b8b8b8"/><stop offset="1" stop-color="#606060"/></radialGradient></defs><ellipse cx="11.5" cy="12.5" rx="6.5" ry="5.5" fill="rgba(15,30,45,0.45)"/><rect x="1" y="5.8" width="20" height="6.6" rx="3.3" fill="#0c0c0c"/><circle cx="11" cy="9" r="6" fill="url(#sg)" stroke="#2a2a2a" stroke-width="0.6"/><g transform="rotate(35 11 9)"><path d="M11 5.2V12.8M7.2 9H14.8" stroke="#161616" stroke-width="1.8"/></g></svg>
<svg class="ab" style="left:751px;top:130px" width="22" height="20"><defs><radialGradient id="sg" cx="0.42" cy="0.38" r="0.65"><stop offset="0" stop-color="#f0f0f0"/><stop offset="0.55" stop-color="#b8b8b8"/><stop offset="1" stop-color="#606060"/></radialGradient></defs><ellipse cx="11.5" cy="12.5" rx="6.5" ry="5.5" fill="rgba(15,30,45,0.45)"/><rect x="1" y="5.8" width="20" height="6.6" rx="3.3" fill="#0c0c0c"/><circle cx="11" cy="9" r="6" fill="url(#sg)" stroke="#2a2a2a" stroke-width="0.6"/><g transform="rotate(10 11 9)"><path d="M11 5.2V12.8M7.2 9H14.8" stroke="#161616" stroke-width="1.8"/></g></svg>
<svg class="ab" style="left:751px;top:175px" width="22" height="20"><defs><radialGradient id="sg" cx="0.42" cy="0.38" r="0.65"><stop offset="0" stop-color="#f0f0f0"/><stop offset="0.55" stop-color="#b8b8b8"/><stop offset="1" stop-color="#606060"/></radialGradient></defs><ellipse cx="11.5" cy="12.5" rx="6.5" ry="5.5" fill="rgba(15,30,45,0.45)"/><rect x="1" y="5.8" width="20" height="6.6" rx="3.3" fill="#0c0c0c"/><circle cx="11" cy="9" r="6" fill="url(#sg)" stroke="#2a2a2a" stroke-width="0.6"/><g transform="rotate(0 11 9)"><path d="M11 5.2V12.8M7.2 9H14.8" stroke="#161616" stroke-width="1.8"/></g></svg>
<svg class="ab" style="left:40px;top:146px" width="11" height="7"><path d="M1.2 1H9.8L5.5 5.8Z" fill="#0e1a26" stroke="#dfe8f0" stroke-width="0.9"/></svg>
<div class="ab" style="left:77px;top:141px;width:29px;height:44px;background:rgba(10,25,45,0.45);filter:blur(2px);border-radius:3px"></div>
<svg class="ab" style="left:74px;top:139px" width="28" height="43"><rect x="0" y="0" width="28" height="43" rx="3" fill="#0c0c0c"/><rect x="2" y="2" width="24" height="1" fill="rgb(43,43,43)"/><rect x="2" y="3" width="24" height="1" fill="rgb(79,79,79)"/><rect x="2" y="4" width="24" height="1" fill="rgb(72,72,72)"/><rect x="2" y="5" width="24" height="1" fill="rgb(45,45,45)"/><rect x="2" y="6" width="24" height="1" fill="rgb(116,116,116)"/><rect x="2" y="7" width="24" height="1" fill="rgb(77,77,77)"/><rect x="2" y="8" width="24" height="1" fill="rgb(49,49,49)"/><rect x="2" y="9" width="24" height="1" fill="rgb(135,135,135)"/><rect x="2" y="10" width="24" height="1" fill="rgb(75,75,75)"/><rect x="2" y="11" width="24" height="1" fill="rgb(59,59,59)"/><rect x="2" y="12" width="24" height="1" fill="rgb(120,120,120)"/><rect x="2" y="13" width="24" height="1" fill="rgb(82,82,82)"/><rect x="2" y="14" width="24" height="1" fill="rgb(61,61,61)"/><rect x="2" y="15" width="24" height="1" fill="rgb(181,181,181)"/><rect x="2" y="16" width="24" height="1" fill="rgb(85,85,85)"/><rect x="2" y="17" width="24" height="1" fill="rgb(57,57,57)"/><rect x="2" y="18" width="24" height="1" fill="rgb(161,161,161)"/><rect x="2" y="19" width="24" height="1" fill="rgb(113,113,113)"/><rect x="2" y="20" width="24" height="1" fill="rgb(61,61,61)"/><rect x="2" y="21" width="24" height="1" fill="rgb(132,132,132)"/><rect x="2" y="22" width="24" height="1" fill="rgb(103,103,103)"/><rect x="2" y="23" width="24" height="1" fill="rgb(49,49,49)"/><rect x="2" y="24" width="24" height="1" fill="rgb(137,137,137)"/><rect x="2" y="25" width="24" height="1" fill="rgb(70,70,70)"/><rect x="2" y="26" width="24" height="1" fill="rgb(46,46,46)"/><rect x="2" y="27" width="24" height="1" fill="rgb(81,81,81)"/><rect x="2" y="28" width="24" height="1" fill="rgb(60,60,60)"/><rect x="2" y="29" width="24" height="1" fill="rgb(47,47,47)"/><rect x="2" y="30" width="24" height="1" fill="rgb(67,67,67)"/><rect x="2" y="31" width="24" height="1" fill="rgb(54,54,54)"/><rect x="2" y="32" width="24" height="1" fill="rgb(40,40,40)"/><rect x="2" y="33" width="24" height="1" fill="rgb(57,57,57)"/><rect x="2" y="34" width="24" height="1" fill="rgb(45,45,45)"/><rect x="2" y="35" width="24" height="1" fill="rgb(35,35,35)"/><rect x="2" y="36" width="24" height="1" fill="rgb(43,43,43)"/><rect x="2" y="37" width="24" height="1" fill="rgb(37,37,37)"/><rect x="2" y="38" width="24" height="1" fill="rgb(34,34,34)"/><rect x="2" y="39" width="24" height="1" fill="rgb(40,40,40)"/><rect x="2" y="40" width="24" height="1" fill="rgb(35,35,35)"/><rect x="2" y="19.3" width="24" height="2.7" fill="#fafafa"/><rect x="2" y="2" width="3" height="39" fill="rgba(0,0,0,0.25)"/><rect x="23" y="2" width="3" height="39" fill="rgba(0,0,0,0.25)"/></svg>
<div class="ab" style="left:117px;top:141px;width:29px;height:44px;background:rgba(10,25,45,0.45);filter:blur(2px);border-radius:3px"></div>
<svg class="ab" style="left:114px;top:139px" width="28" height="43"><rect x="0" y="0" width="28" height="43" rx="3" fill="#0c0c0c"/><rect x="2" y="2" width="24" height="1" fill="rgb(44,44,44)"/><rect x="2" y="3" width="24" height="1" fill="rgb(94,94,94)"/><rect x="2" y="4" width="24" height="1" fill="rgb(78,78,78)"/><rect x="2" y="5" width="24" height="1" fill="rgb(50,50,50)"/><rect x="2" y="6" width="24" height="1" fill="rgb(114,114,114)"/><rect x="2" y="7" width="24" height="1" fill="rgb(83,83,83)"/><rect x="2" y="8" width="24" height="1" fill="rgb(51,51,51)"/><rect x="2" y="9" width="24" height="1" fill="rgb(136,136,136)"/><rect x="2" y="10" width="24" height="1" fill="rgb(96,96,96)"/><rect x="2" y="11" width="24" height="1" fill="rgb(65,65,65)"/><rect x="2" y="12" width="24" height="1" fill="rgb(121,121,121)"/><rect x="2" y="13" width="24" height="1" fill="rgb(91,91,91)"/><rect x="2" y="14" width="24" height="1" fill="rgb(55,55,55)"/><rect x="2" y="15" width="24" height="1" fill="rgb(180,180,180)"/><rect x="2" y="16" width="24" height="1" fill="rgb(108,108,108)"/><rect x="2" y="17" width="24" height="1" fill="rgb(54,54,54)"/><rect x="2" y="18" width="24" height="1" fill="rgb(187,187,187)"/><rect x="2" y="19" width="24" height="1" fill="rgb(114,114,114)"/><rect x="2" y="20" width="24" height="1" fill="rgb(62,62,62)"/><rect x="2" y="21" width="24" height="1" fill="rgb(146,146,146)"/><rect x="2" y="22" width="24" height="1" fill="rgb(76,76,76)"/><rect x="2" y="23" width="24" height="1" fill="rgb(48,48,48)"/><rect x="2" y="24" width="24" height="1" fill="rgb(120,120,120)"/><rect x="2" y="25" width="24" height="1" fill="rgb(64,64,64)"/><rect x="2" y="26" width="24" height="1" fill="rgb(46,46,46)"/><rect x="2" y="27" width="24" height="1" fill="rgb(86,86,86)"/><rect x="2" y="28" width="24" height="1" fill="rgb(54,54,54)"/><rect x="2" y="29" width="24" height="1" fill="rgb(44,44,44)"/><rect x="2" y="30" width="24" height="1" fill="rgb(74,74,74)"/><rect x="2" y="31" width="24" height="1" fill="rgb(57,57,57)"/><rect x="2" y="32" width="24" height="1" fill="rgb(40,40,40)"/><rect x="2" y="33" width="24" height="1" fill="rgb(62,62,62)"/><rect x="2" y="34" width="24" height="1" fill="rgb(44,44,44)"/><rect x="2" y="35" width="24" height="1" fill="rgb(37,37,37)"/><rect x="2" y="36" width="24" height="1" fill="rgb(47,47,47)"/><rect x="2" y="37" width="24" height="1" fill="rgb(38,38,38)"/><rect x="2" y="38" width="24" height="1" fill="rgb(35,35,35)"/><rect x="2" y="39" width="24" height="1" fill="rgb(42,42,42)"/><rect x="2" y="40" width="24" height="1" fill="rgb(36,36,36)"/><rect x="2" y="38.3" width="24" height="1.7" fill="#eeeeee"/><rect x="2" y="2" width="3" height="39" fill="rgba(0,0,0,0.25)"/><rect x="23" y="2" width="3" height="39" fill="rgba(0,0,0,0.25)"/></svg>
<div class="ab wlbl" style="left:76.5px;top:184px">PITCH</div>
<div class="ab wlbl" style="left:118.5px;top:184px">MOD</div>
<div class="ab ud" style="left:157.5px;top:146.5px"></div>
<div class="ab ud" style="left:157.5px;top:164.5px"></div>
<svg class="ab" style="left:157px;top:146px" width="26" height="33"><path d="M7.5 9.5H15.5L11.5 5Z" fill="#4a4232"/><path d="M7.5 23H15.5L11.5 27.5Z" fill="#4a4232"/><path d="M11.5 14.5V18.5M11.5 16.5H25" stroke="#b8cce0" stroke-width="1"/></svg>
<div class="ab lcdframe" style="left:181px;top:133.5px;width:244px;height:58px"></div>
<div class="ab" style="left:182.5px;top:135px;width:236px;height:25px;background:#625a56"></div>
<div class="ab" style="left:418px;top:136px;width:5px;height:53px;background:linear-gradient(180deg,#6a6a6a,#444 40%,#222 60%)"></div>
<div class="ab lcd" style="left:188px;top:138px;width:230px;height:50px"></div>
<div class="ab pname" style="left:204px;top:150.5px">Bass</div>
<div class="ab" style="left:344px;top:139px;width:70px;height:10px;background:#08488e"></div>
<div class="ab plist" style="left:234px;width:180px;top:138.3px;color:#c4e2fc">Finger</div>
<div class="ab plist" style="left:234px;width:180px;top:150.25px;color:#0e4a8e">Pick</div>
<div class="ab plist" style="left:234px;width:180px;top:162.20000000000002px;color:#0e4a8e">Upright</div>
<div class="ab plist" style="left:234px;width:180px;top:174.15px;color:#0e4a8e">Synth</div>
<div class="ab" style="left:421px;top:143.7px;width:8px;height:1px;background:#8a96a4"></div>
<div class="ab abtn" style="left:429px;top:138.5px;height:11.3px;background:radial-gradient(ellipse at 50% 45%,#ffb878 0,#ff8a70 30%,#f06a5a 70%,#d85848);"></div>
<div class="ab albl" style="left:454.5px;top:139.8px">A</div>
<div class="ab" style="left:421px;top:155.9px;width:8px;height:1px;background:#8a96a4"></div>
<div class="ab abtn" style="left:429px;top:151.3px;height:10.2px;"></div>
<div class="ab albl" style="left:454.5px;top:152.1px">B</div>
<div class="ab" style="left:421px;top:168.2px;width:8px;height:1px;background:#8a96a4"></div>
<div class="ab abtn" style="left:429px;top:163.6px;height:10.2px;"></div>
<div class="ab albl" style="left:454.5px;top:164.4px">C</div>
<div class="ab" style="left:421px;top:180.2px;width:8px;height:1px;background:#8a96a4"></div>
<div class="ab abtn" style="left:429px;top:175.6px;height:10.2px;"></div>
<div class="ab albl" style="left:454.5px;top:176.4px">D</div>
<svg class="ab" style="left:477.00px;top:132.60px" width="30" height="30"><defs><radialGradient id="kg" cx="0.42" cy="0.38" r="0.6"><stop offset="0" stop-color="#4a4642"/><stop offset="0.7" stop-color="#363230"/><stop offset="1" stop-color="#242220"/></radialGradient></defs><rect x="5.34" y="23.16" width="1.5" height="1.5" fill="#6690b8"/><rect x="2.61" y="19.07" width="1.5" height="1.5" fill="#6690b8"/><rect x="1.65" y="14.25" width="1.5" height="1.5" fill="#6690b8"/><rect x="2.61" y="9.43" width="1.5" height="1.5" fill="#6690b8"/><rect x="5.34" y="5.34" width="1.5" height="1.5" fill="#6690b8"/><rect x="9.43" y="2.61" width="1.5" height="1.5" fill="#6690b8"/><rect x="14.25" y="1.65" width="1.5" height="1.5" fill="#6690b8"/><rect x="19.07" y="2.61" width="1.5" height="1.5" fill="#6690b8"/><rect x="23.16" y="5.34" width="1.5" height="1.5" fill="#6690b8"/><rect x="25.89" y="9.43" width="1.5" height="1.5" fill="#6690b8"/><rect x="26.85" y="14.25" width="1.5" height="1.5" fill="#6690b8"/><rect x="25.89" y="19.07" width="1.5" height="1.5" fill="#6690b8"/><rect x="23.16" y="23.16" width="1.5" height="1.5" fill="#6690b8"/><circle cx="16.5" cy="17.0" r="10.1" fill="rgba(10,25,40,0.45)"/><circle cx="15.0" cy="15.0" r="9.6" fill="#121212"/><circle cx="14.7" cy="14.7" r="7.8" fill="url(#kg)"/><line x1="12.13" y1="17.01" x2="8.45" y2="19.59" stroke="#d4d4d4" stroke-width="1.8" stroke-linecap="round"/></svg>
<div class="ab" style="left:503px;top:147.1px;width:4px;height:1.5px;background:#dde"></div>
<div class="ab pdisp" style="left:507px;top:138px"><div class="ab pdin">Chorus Amt</div></div>
<svg class="ab" style="left:477.00px;top:162.50px" width="30" height="30"><defs><radialGradient id="kg" cx="0.42" cy="0.38" r="0.6"><stop offset="0" stop-color="#4a4642"/><stop offset="0.7" stop-color="#363230"/><stop offset="1" stop-color="#242220"/></radialGradient></defs><rect x="5.34" y="23.16" width="1.5" height="1.5" fill="#6690b8"/><rect x="2.61" y="19.07" width="1.5" height="1.5" fill="#6690b8"/><rect x="1.65" y="14.25" width="1.5" height="1.5" fill="#6690b8"/><rect x="2.61" y="9.43" width="1.5" height="1.5" fill="#6690b8"/><rect x="5.34" y="5.34" width="1.5" height="1.5" fill="#6690b8"/><rect x="9.43" y="2.61" width="1.5" height="1.5" fill="#6690b8"/><rect x="14.25" y="1.65" width="1.5" height="1.5" fill="#6690b8"/><rect x="19.07" y="2.61" width="1.5" height="1.5" fill="#6690b8"/><rect x="23.16" y="5.34" width="1.5" height="1.5" fill="#6690b8"/><rect x="25.89" y="9.43" width="1.5" height="1.5" fill="#6690b8"/><rect x="26.85" y="14.25" width="1.5" height="1.5" fill="#6690b8"/><rect x="25.89" y="19.07" width="1.5" height="1.5" fill="#6690b8"/><rect x="23.16" y="23.16" width="1.5" height="1.5" fill="#6690b8"/><circle cx="16.5" cy="17.0" r="10.1" fill="rgba(10,25,40,0.45)"/><circle cx="15.0" cy="15.0" r="9.6" fill="#121212"/><circle cx="14.7" cy="14.7" r="7.8" fill="url(#kg)"/><line x1="11.71" y1="13.80" x2="7.48" y2="12.26" stroke="#d4d4d4" stroke-width="1.8" stroke-linecap="round"/></svg>
<div class="ab" style="left:503px;top:177.0px;width:4px;height:1.5px;background:#dde"></div>
<div class="ab pdisp" style="left:507px;top:168px"><div class="ab pdin">Chorus Type</div></div>
<svg class="ab" style="left:601.20px;top:138.00px" width="46" height="46"><defs><radialGradient id="kg" cx="0.42" cy="0.38" r="0.6"><stop offset="0" stop-color="#4a4642"/><stop offset="0.7" stop-color="#363230"/><stop offset="1" stop-color="#242220"/></radialGradient></defs><rect x="8.35" y="35.65" width="2" height="2" fill="#6a9cc4"/><rect x="4.17" y="29.39" width="2" height="2" fill="#6a9cc4"/><rect x="2.70" y="22.00" width="2" height="2" fill="#6a9cc4"/><rect x="4.17" y="14.61" width="2" height="2" fill="#6a9cc4"/><rect x="8.35" y="8.35" width="2" height="2" fill="#6a9cc4"/><rect x="14.61" y="4.17" width="2" height="2" fill="#6a9cc4"/><rect x="22.00" y="2.70" width="2" height="2" fill="#6a9cc4"/><rect x="29.39" y="4.17" width="2" height="2" fill="#6a9cc4"/><rect x="35.65" y="8.35" width="2" height="2" fill="#6a9cc4"/><rect x="39.83" y="14.61" width="2" height="2" fill="#6a9cc4"/><rect x="41.30" y="22.00" width="2" height="2" fill="#6a9cc4"/><rect x="39.83" y="29.39" width="2" height="2" fill="#6a9cc4"/><rect x="35.65" y="35.65" width="2" height="2" fill="#6a9cc4"/><circle cx="24.5" cy="25.0" r="16.3" fill="rgba(10,25,40,0.45)"/><circle cx="23.0" cy="23.0" r="15.8" fill="#121212"/><circle cx="22.7" cy="22.7" r="14.0" fill="url(#kg)"/><line x1="29.28" y1="21.32" x2="37.01" y2="19.25" stroke="#d4d4d4" stroke-width="2" stroke-linecap="round"/></svg>
<div class="ab" style="left:607px;top:179.5px;font-size:7.5px;font-weight:bold;color:#9ab0c6;letter-spacing:0.5px;line-height:8px;transform:scaleX(0.98);transform-origin:0 0">VOLUME</div>
<svg class="ab" style="left:663px;top:133px" width="78" height="13"><path d="M1 0.5H77L76 3L77.5 6L76 9.5L77 12.5H1L2 9L0.5 6L2 3Z" fill="#efebcb"/><text x="39" y="10" text-anchor="middle" font-family="Liberation Sans" font-weight="bold" font-size="8.5" fill="#111" letter-spacing="0.6">ID8 2</text></svg>
<svg class="ab" style="left:662px;top:151px" width="48" height="22"><rect x="1" y="0.7" width="4.3" height="19.2" fill="#d97a2a"/><rect x="10" y="0.7" width="4.3" height="19.2" fill="#d97a2a"/><path d="M16.3 0.7H19.5A7.7 9.6 0 0 1 19.5 19.9H16.3V15.6H19.3A3.4 5.3 0 0 0 19.3 5H16.3Z" fill="#d97a2a"/><path fill-rule="evenodd" d="M31.5 5.6A7.1 4.9 0 1 0 45.7 5.6A7.1 4.9 0 1 0 31.5 5.6Z M36 7A2.6 2.1 0 1 0 41.2 7A2.6 2.1 0 1 0 36 7Z" fill="#a6c064"/><path fill-rule="evenodd" d="M31.1 15A7.5 4.9 0 1 0 46.1 15A7.5 4.9 0 1 0 31.1 15Z M35.6 15A3 2.4 0 1 0 41.6 15A3 2.4 0 1 0 35.6 15Z" fill="#a6c064"/><rect x="38" y="0" width="1.2" height="21" fill="#3a5f86"/></svg>
<div class="ab idev" style="left:663px;top:172.5px">instrument device</div>
<div class="ab tab" style="top:200px;background:linear-gradient(#f6e51f,#f6e51f)"></div>
<svg class="ab" style="left:41px;top:206px" width="10" height="13"><path d="M2.5 2.5 L7.5 6.3 L2.5 10.3 Z" fill="#e8dcc8" stroke="#000" stroke-width="1.5" stroke-linejoin="miter"/></svg>
<div class="ab tname" style="top:206px">ID8 3</div>
<div class="ab gray" style="top:200px"></div>
<div class="ab btn" style="left:176px;top:202px;width:24px;height:20px">MUTE</div>
<div class="ab btn" style="left:205px;top:202px;width:24px;height:20px">SOLO</div>
<div class="ab" style="left:253px;top:212px;width:152px;height:2px;background:#161616;border-radius:1px"></div>
<div class="ab" style="left:254px;top:214px;width:151px;height:1px;background:#fff"></div>
<svg class="ab" style="left:253px;top:207px" width="160" height="14"><rect x="6.0" y="0" width="1" height="3" fill="#555"/><rect x="6.0" y="10" width="1" height="3" fill="#555"/><rect x="10.0" y="0" width="1" height="3" fill="#555"/><rect x="10.0" y="10" width="1" height="3" fill="#555"/><rect x="14.0" y="0" width="1" height="3" fill="#555"/><rect x="14.0" y="10" width="1" height="3" fill="#555"/><rect x="22.0" y="0" width="1" height="3" fill="#555"/><rect x="22.0" y="10" width="1" height="3" fill="#555"/><rect x="36.0" y="0" width="1" height="3" fill="#555"/><rect x="36.0" y="10" width="1" height="3" fill="#555"/><rect x="61.0" y="0" width="1" height="3" fill="#555"/><rect x="61.0" y="10" width="1" height="3" fill="#555"/><rect x="81.0" y="0" width="1" height="3" fill="#555"/><rect x="81.0" y="10" width="1" height="3" fill="#555"/><rect x="144.0" y="0" width="1" height="3" fill="#555"/><rect x="144.0" y="10" width="1" height="3" fill="#555"/></svg>
<div class="ab" style="left:347px;top:209px;width:31px;height:15px;background:rgba(0,0,0,0.3);filter:blur(1.5px);border-radius:3px"></div>
<div class="ab" style="left:344px;top:206px;width:33px;height:15px;border:1px solid #6a6a70;border-radius:2px;background:linear-gradient(90deg,#b8bac4,#e8e8ee 12%,#c4c6ce 20%,#f0f0f4 30%,#c8cad2 40%,#eeeef2 48%,#c0c2ca 56%,#f0f0f4 66%,#c6c8d0 76%,#ececf0 86%,#b4b6c0)"></div>
<div class="ab" style="left:360px;top:203px;width:1px;height:20px;background:#1a1a1a"></div>
<svg class="ab" style="left:426.5px;top:198.7px" width="28" height="28"><line x1="6.22" y1="21.78" x2="4.45" y2="23.55" stroke="#8a8a8a" stroke-width="1"/><line x1="3.54" y1="17.40" x2="1.16" y2="18.17" stroke="#8a8a8a" stroke-width="1"/><line x1="3.14" y1="12.28" x2="0.67" y2="11.89" stroke="#8a8a8a" stroke-width="1"/><line x1="5.10" y1="7.53" x2="3.08" y2="6.06" stroke="#8a8a8a" stroke-width="1"/><line x1="9.01" y1="4.20" x2="7.87" y2="1.97" stroke="#8a8a8a" stroke-width="1"/><line x1="14.00" y1="3.00" x2="14.00" y2="0.50" stroke="#8a8a8a" stroke-width="1"/><line x1="18.99" y1="4.20" x2="20.13" y2="1.97" stroke="#8a8a8a" stroke-width="1"/><line x1="22.90" y1="7.53" x2="24.92" y2="6.06" stroke="#8a8a8a" stroke-width="1"/><line x1="24.86" y1="12.28" x2="27.33" y2="11.89" stroke="#8a8a8a" stroke-width="1"/><line x1="24.46" y1="17.40" x2="26.84" y2="18.17" stroke="#8a8a8a" stroke-width="1"/><line x1="21.78" y1="21.78" x2="23.55" y2="23.55" stroke="#8a8a8a" stroke-width="1"/><circle cx="15" cy="15.5" r="9" fill="rgba(0,0,0,0.18)"/><circle cx="14" cy="14" r="8.7" fill="#3c66bc" stroke="#142448" stroke-width="1.5"/><circle cx="12.5" cy="12" r="4" fill="rgba(255,255,255,0.12)"/><line x1="14" y1="7" x2="14" y2="12.5" stroke="#f4f4f4" stroke-width="1.6"/></svg>
<div class="ab" style="left:421px;top:217px;font-size:8px;font-weight:bold;color:#666;line-height:9px">L</div>
<div class="ab" style="left:453px;top:217px;font-size:8px;font-weight:bold;color:#666;line-height:9px">R</div>
<div class="ab dark" style="top:200px"></div>
<div class="ab" style="left:466px;top:200px;width:268px;height:1px;background:#4a4a4a"></div>
<div class="ab" style="left:466px;top:201px;width:268px;height:9px;background:#2c2c2c"></div>
<div class="ab btn" style="left:470px;top:204px;width:20px;height:19.5px;line-height:18px">SEQ</div>
<div class="ab btn" style="left:495px;top:204px;width:19px;height:19.5px;line-height:18px">MIX</div>
<div class="ab btn" style="left:517px;top:204px;width:36px;height:20px"></div>
<svg class="ab" style="left:521px;top:207px" width="28" height="13"><rect x="0.5" y="0.5" width="27" height="12" fill="none" stroke="#4a4a4a"/><path d="M2.5 10 C4 3,5.5 2.5,7.5 6 S11 9.5,13.5 6.5 S17 4.5,19 7.5 S24 4,27 3" fill="none" stroke="#333" stroke-width="1"/></svg>
<svg class="ab" style="left:559px;top:205px" width="160" height="16"><rect x="0" y="0" width="4" height="6" fill="#4e4e4e"/><rect x="0" y="9" width="4" height="7" fill="#383838"/><rect x="5" y="0" width="4" height="6" fill="#4e4e4e"/><rect x="5" y="9" width="4" height="7" fill="#383838"/><rect x="10" y="0" width="4" height="6" fill="#4e4e4e"/><rect x="10" y="9" width="4" height="7" fill="#383838"/><rect x="15" y="0" width="4" height="6" fill="#4e4e4e"/><rect x="15" y="9" width="4" height="7" fill="#383838"/><rect x="20" y="0" width="4" height="6" fill="#4e4e4e"/><rect x="20" y="9" width="4" height="7" fill="#383838"/><rect x="25" y="0" width="4" height="6" fill="#4e4e4e"/><rect x="25" y="9" width="4" height="7" fill="#383838"/><rect x="30" y="0" width="4" height="6" fill="#4e4e4e"/><rect x="30" y="9" width="4" height="7" fill="#383838"/><rect x="35" y="0" width="4" height="6" fill="#4e4e4e"/><rect x="35" y="9" width="4" height="7" fill="#383838"/><rect x="40" y="0" width="4" height="6" fill="#4e4e4e"/><rect x="40" y="9" width="4" height="7" fill="#383838"/><rect x="45" y="0" width="4" height="6" fill="#4e4e4e"/><rect x="45" y="9" width="4" height="7" fill="#383838"/><rect x="50" y="0" width="4" height="6" fill="#4e4e4e"/><rect x="50" y="9" width="4" height="7" fill="#383838"/><rect x="55" y="0" width="4" height="6" fill="#4e4e4e"/><rect x="55" y="9" width="4" height="7" fill="#383838"/><rect x="60" y="0" width="4" height="6" fill="#4e4e4e"/><rect x="60" y="9" width="4" height="7" fill="#383838"/><rect x="65" y="0" width="4" height="6" fill="#4e4e4e"/><rect x="65" y="9" width="4" height="7" fill="#383838"/><rect x="70" y="0" width="4" height="6" fill="#4e4e4e"/><rect x="70" y="9" width="4" height="7" fill="#383838"/><rect x="75" y="0" width="4" height="6" fill="#4e4e4e"/><rect x="75" y="9" width="4" height="7" fill="#383838"/><rect x="80" y="0" width="4" height="6" fill="#4e4e4e"/><rect x="80" y="9" width="4" height="7" fill="#383838"/><rect x="85" y="0" width="4" height="6" fill="#4e4e4e"/><rect x="85" y="9" width="4" height="7" fill="#383838"/><rect x="90" y="0" width="4" height="6" fill="#4e4e4e"/><rect x="90" y="9" width="4" height="7" fill="#383838"/><rect x="95" y="0" width="4" height="6" fill="#4e4e4e"/><rect x="95" y="9" width="4" height="7" fill="#383838"/><rect x="100" y="0" width="4" height="6" fill="#4e4e4e"/><rect x="100" y="9" width="4" height="7" fill="#383838"/><rect x="105" y="0" width="4" height="6" fill="#4e4e4e"/><rect x="105" y="9" width="4" height="7" fill="#383838"/><rect x="110" y="0" width="4" height="6" fill="#4e4e4e"/><rect x="110" y="9" width="4" height="7" fill="#383838"/><rect x="115" y="0" width="4" height="6" fill="#4e4e4e"/><rect x="115" y="9" width="4" height="7" fill="#383838"/><rect x="120" y="0" width="4" height="6" fill="#4e4e4e"/><rect x="120" y="9" width="4" height="7" fill="#383838"/><rect x="125" y="0" width="4" height="6" fill="#4e4e4e"/><rect x="125" y="9" width="4" height="7" fill="#383838"/><rect x="130" y="0" width="4" height="6" fill="#4e4e4e"/><rect x="130" y="9" width="4" height="7" fill="#383838"/><rect x="135" y="0" width="4" height="6" fill="#4e4e4e"/><rect x="135" y="9" width="4" height="7" fill="#383838"/><rect x="140" y="0" width="4" height="6" fill="#4e4e4e"/><rect x="140" y="9" width="4" height="7" fill="#383838"/><rect x="145" y="0" width="4" height="6" fill="#4e4e4e"/><rect x="145" y="9" width="4" height="7" fill="#383838"/><rect x="150" y="0" width="4" height="6" fill="#4e4e4e"/><rect x="150" y="9" width="4" height="7" fill="#383838"/><rect x="155" y="0" width="4" height="6" fill="#4e4e4e"/><rect x="155" y="9" width="4" height="7" fill="#383838"/></svg>
<div class="ab mixtab" style="top:200px"><div class="ab mixt">MIX</div></div>
<div class="ab panel" style="top:227.3px;height:67.2px;border:1px solid #7894ac;border-top-color:#a4bacc;border-bottom-color:#62788e;border-radius:3px"></div>
<div class="ab stripes" style="left:26px;top:228.3px;width:751px;height:65.2px"></div>
<svg class="ab" style="left:28px;top:229px" width="22" height="20"><defs><radialGradient id="sg" cx="0.42" cy="0.38" r="0.65"><stop offset="0" stop-color="#f0f0f0"/><stop offset="0.55" stop-color="#b8b8b8"/><stop offset="1" stop-color="#606060"/></radialGradient></defs><ellipse cx="11.5" cy="12.5" rx="6.5" ry="5.5" fill="rgba(15,30,45,0.45)"/><rect x="1" y="5.8" width="20" height="6.6" rx="3.3" fill="#0c0c0c"/><circle cx="11" cy="9" r="6" fill="url(#sg)" stroke="#2a2a2a" stroke-width="0.6"/><g transform="rotate(0 11 9)"><path d="M11 5.2V12.8M7.2 9H14.8" stroke="#161616" stroke-width="1.8"/></g></svg>
<svg class="ab" style="left:28px;top:274px" width="22" height="20"><defs><radialGradient id="sg" cx="0.42" cy="0.38" r="0.65"><stop offset="0" stop-color="#f0f0f0"/><stop offset="0.55" stop-color="#b8b8b8"/><stop offset="1" stop-color="#606060"/></radialGradient></defs><ellipse cx="11.5" cy="12.5" rx="6.5" ry="5.5" fill="rgba(15,30,45,0.45)"/><rect x="1" y="5.8" width="20" height="6.6" rx="3.3" fill="#0c0c0c"/><circle cx="11" cy="9" r="6" fill="url(#sg)" stroke="#2a2a2a" stroke-width="0.6"/><g transform="rotate(35 11 9)"><path d="M11 5.2V12.8M7.2 9H14.8" stroke="#161616" stroke-width="1.8"/></g></svg>
<svg class="ab" style="left:751px;top:229px" width="22" height="20"><defs><radialGradient id="sg" cx="0.42" cy="0.38" r="0.65"><stop offset="0" stop-color="#f0f0f0"/><stop offset="0.55" stop-color="#b8b8b8"/><stop offset="1" stop-color="#606060"/></radialGradient></defs><ellipse cx="11.5" cy="12.5" rx="6.5" ry="5.5" fill="rgba(15,30,45,0.45)"/><rect x="1" y="5.8" width="20" height="6.6" rx="3.3" fill="#0c0c0c"/><circle cx="11" cy="9" r="6" fill="url(#sg)" stroke="#2a2a2a" stroke-width="0.6"/><g transform="rotate(10 11 9)"><path d="M11 5.2V12.8M7.2 9H14.8" stroke="#161616" stroke-width="1.8"/></g></svg>
<svg class="ab" style="left:751px;top:274px" width="22" height="20"><defs><radialGradient id="sg" cx="0.42" cy="0.38" r="0.65"><stop offset="0" stop-color="#f0f0f0"/><stop offset="0.55" stop-color="#b8b8b8"/><stop offset="1" stop-color="#606060"/></radialGradient></defs><ellipse cx="11.5" cy="12.5" rx="6.5" ry="5.5" fill="rgba(15,30,45,0.45)"/><rect x="1" y="5.8" width="20" height="6.6" rx="3.3" fill="#0c0c0c"/><circle cx="11" cy="9" r="6" fill="url(#sg)" stroke="#2a2a2a" stroke-width="0.6"/><g transform="rotate(0 11 9)"><path d="M11 5.2V12.8M7.2 9H14.8" stroke="#161616" stroke-width="1.8"/></g></svg>
<svg class="ab" style="left:40px;top:245px" width="11" height="7"><path d="M1.2 1H9.8L5.5 5.8Z" fill="#0e1a26" stroke="#dfe8f0" stroke-width="0.9"/></svg>
<div class="ab" style="left:77px;top:240px;width:29px;height:44px;background:rgba(10,25,45,0.45);filter:blur(2px);border-radius:3px"></div>
<svg class="ab" style="left:74px;top:238px" width="28" height="43"><rect x="0" y="0" width="28" height="43" rx="3" fill="#0c0c0c"/><rect x="2" y="2" width="24" height="1" fill="rgb(43,43,43)"/><rect x="2" y="3" width="24" height="1" fill="rgb(79,79,79)"/><rect x="2" y="4" width="24" height="1" fill="rgb(72,72,72)"/><rect x="2" y="5" width="24" height="1" fill="rgb(45,45,45)"/><rect x="2" y="6" width="24" height="1" fill="rgb(116,116,116)"/><rect x="2" y="7" width="24" height="1" fill="rgb(77,77,77)"/><rect x="2" y="8" width="24" height="1" fill="rgb(49,49,49)"/><rect x="2" y="9" width="24" height="1" fill="rgb(135,135,135)"/><rect x="2" y="10" width="24" height="1" fill="rgb(75,75,75)"/><rect x="2" y="11" width="24" height="1" fill="rgb(59,59,59)"/><rect x="2" y="12" width="24" height="1" fill="rgb(120,120,120)"/><rect x="2" y="13" width="24" height="1" fill="rgb(82,82,82)"/><rect x="2" y="14" width="24" height="1" fill="rgb(61,61,61)"/><rect x="2" y="15" width="24" height="1" fill="rgb(181,181,181)"/><rect x="2" y="16" width="24" height="1" fill="rgb(85,85,85)"/><rect x="2" y="17" width="24" height="1" fill="rgb(57,57,57)"/><rect x="2" y="18" width="24" height="1" fill="rgb(161,161,161)"/><rect x="2" y="19" width="24" height="1" fill="rgb(113,113,113)"/><rect x="2" y="20" width="24" height="1" fill="rgb(61,61,61)"/><rect x="2" y="21" width="24" height="1" fill="rgb(132,132,132)"/><rect x="2" y="22" width="24" height="1" fill="rgb(103,103,103)"/><rect x="2" y="23" width="24" height="1" fill="rgb(49,49,49)"/><rect x="2" y="24" width="24" height="1" fill="rgb(137,137,137)"/><rect x="2" y="25" width="24" height="1" fill="rgb(70,70,70)"/><rect x="2" y="26" width="24" height="1" fill="rgb(46,46,46)"/><rect x="2" y="27" width="24" height="1" fill="rgb(81,81,81)"/><rect x="2" y="28" width="24" height="1" fill="rgb(60,60,60)"/><rect x="2" y="29" width="24" height="1" fill="rgb(47,47,47)"/><rect x="2" y="30" width="24" height="1" fill="rgb(67,67,67)"/><rect x="2" y="31" width="24" height="1" fill="rgb(54,54,54)"/><rect x="2" y="32" width="24" height="1" fill="rgb(40,40,40)"/><rect x="2" y="33" width="24" height="1" fill="rgb(57,57,57)"/><rect x="2" y="34" width="24" height="1" fill="rgb(45,45,45)"/><rect x="2" y="35" width="24" height="1" fill="rgb(35,35,35)"/><rect x="2" y="36" width="24" height="1" fill="rgb(43,43,43)"/><rect x="2" y="37" width="24" height="1" fill="rgb(37,37,37)"/><rect x="2" y="38" width="24" height="1" fill="rgb(34,34,34)"/><rect x="2" y="39" width="24" height="1" fill="rgb(40,40,40)"/><rect x="2" y="40" width="24" height="1" fill="rgb(35,35,35)"/><rect x="2" y="19.3" width="24" height="2.7" fill="#fafafa"/><rect x="2" y="2" width="3" height="39" fill="rgba(0,0,0,0.25)"/><rect x="23" y="2" width="3" height="39" fill="rgba(0,0,0,0.25)"/></svg>
<div class="ab" style="left:117px;top:240px;width:29px;height:44px;background:rgba(10,25,45,0.45);filter:blur(2px);border-radius:3px"></div>
<svg class="ab" style="left:114px;top:238px" width="28" height="43"><rect x="0" y="0" width="28" height="43" rx="3" fill="#0c0c0c"/><rect x="2" y="2" width="24" height="1" fill="rgb(44,44,44)"/><rect x="2" y="3" width="24" height="1" fill="rgb(94,94,94)"/><rect x="2" y="4" width="24" height="1" fill="rgb(78,78,78)"/><rect x="2" y="5" width="24" height="1" fill="rgb(50,50,50)"/><rect x="2" y="6" width="24" height="1" fill="rgb(114,114,114)"/><rect x="2" y="7" width="24" height="1" fill="rgb(83,83,83)"/><rect x="2" y="8" width="24" height="1" fill="rgb(51,51,51)"/><rect x="2" y="9" width="24" height="1" fill="rgb(136,136,136)"/><rect x="2" y="10" width="24" height="1" fill="rgb(96,96,96)"/><rect x="2" y="11" width="24" height="1" fill="rgb(65,65,65)"/><rect x="2" y="12" width="24" height="1" fill="rgb(121,121,121)"/><rect x="2" y="13" width="24" height="1" fill="rgb(91,91,91)"/><rect x="2" y="14" width="24" height="1" fill="rgb(55,55,55)"/><rect x="2" y="15" width="24" height="1" fill="rgb(180,180,180)"/><rect x="2" y="16" width="24" height="1" fill="rgb(108,108,108)"/><rect x="2" y="17" width="24" height="1" fill="rgb(54,54,54)"/><rect x="2" y="18" width="24" height="1" fill="rgb(187,187,187)"/><rect x="2" y="19" width="24" height="1" fill="rgb(114,114,114)"/><rect x="2" y="20" width="24" height="1" fill="rgb(62,62,62)"/><rect x="2" y="21" width="24" height="1" fill="rgb(146,146,146)"/><rect x="2" y="22" width="24" height="1" fill="rgb(76,76,76)"/><rect x="2" y="23" width="24" height="1" fill="rgb(48,48,48)"/><rect x="2" y="24" width="24" height="1" fill="rgb(120,120,120)"/><rect x="2" y="25" width="24" height="1" fill="rgb(64,64,64)"/><rect x="2" y="26" width="24" height="1" fill="rgb(46,46,46)"/><rect x="2" y="27" width="24" height="1" fill="rgb(86,86,86)"/><rect x="2" y="28" width="24" height="1" fill="rgb(54,54,54)"/><rect x="2" y="29" width="24" height="1" fill="rgb(44,44,44)"/><rect x="2" y="30" width="24" height="1" fill="rgb(74,74,74)"/><rect x="2" y="31" width="24" height="1" fill="rgb(57,57,57)"/><rect x="2" y="32" width="24" height="1" fill="rgb(40,40,40)"/><rect x="2" y="33" width="24" height="1" fill="rgb(62,62,62)"/><rect x="2" y="34" width="24" height="1" fill="rgb(44,44,44)"/><rect x="2" y="35" width="24" height="1" fill="rgb(37,37,37)"/><rect x="2" y="36" width="24" height="1" fill="rgb(47,47,47)"/><rect x="2" y="37" width="24" height="1" fill="rgb(38,38,38)"/><rect x="2" y="38" width="24" height="1" fill="rgb(35,35,35)"/><rect x="2" y="39" width="24" height="1" fill="rgb(42,42,42)"/><rect x="2" y="40" width="24" height="1" fill="rgb(36,36,36)"/><rect x="2" y="38.3" width="24" height="1.7" fill="#eeeeee"/><rect x="2" y="2" width="3" height="39" fill="rgba(0,0,0,0.25)"/><rect x="23" y="2" width="3" height="39" fill="rgba(0,0,0,0.25)"/></svg>
<div class="ab wlbl" style="left:76.5px;top:283px">PITCH</div>
<div class="ab wlbl" style="left:118.5px;top:283px">MOD</div>
<div class="ab ud" style="left:157.5px;top:245.5px"></div>
<div class="ab ud" style="left:157.5px;top:263.5px"></div>
<svg class="ab" style="left:157px;top:245px" width="26" height="33"><path d="M7.5 9.5H15.5L11.5 5Z" fill="#4a4232"/><path d="M7.5 23H15.5L11.5 27.5Z" fill="#4a4232"/><path d="M11.5 14.5V18.5M11.5 16.5H25" stroke="#b8cce0" stroke-width="1"/></svg>
<div class="ab lcdframe" style="left:181px;top:232.5px;width:244px;height:58px"></div>
<div class="ab" style="left:182.5px;top:234px;width:236px;height:25px;background:#625a56"></div>
<div class="ab" style="left:418px;top:235px;width:5px;height:53px;background:linear-gradient(180deg,#6a6a6a,#444 40%,#222 60%)"></div>
<div class="ab lcd" style="left:188px;top:237px;width:230px;height:50px"></div>
<div class="ab pname" style="left:204px;top:249.5px">Strings</div>
<div class="ab" style="left:344px;top:238px;width:70px;height:10px;background:#08488e"></div>
<div class="ab plist" style="left:234px;width:180px;top:237.3px;color:#c4e2fc">Orchestral</div>
<div class="ab plist" style="left:234px;width:180px;top:249.25px;color:#0e4a8e">Arco</div>
<div class="ab plist" style="left:234px;width:180px;top:261.2px;color:#0e4a8e">Small Section</div>
<div class="ab plist" style="left:234px;width:180px;top:273.15px;color:#0e4a8e">Choir</div>
<div class="ab" style="left:421px;top:242.7px;width:8px;height:1px;background:#8a96a4"></div>
<div class="ab abtn" style="left:429px;top:237.5px;height:11.3px;background:radial-gradient(ellipse at 50% 45%,#ffb878 0,#ff8a70 30%,#f06a5a 70%,#d85848);"></div>
<div class="ab albl" style="left:454.5px;top:238.8px">A</div>
<div class="ab" style="left:421px;top:254.9px;width:8px;height:1px;background:#8a96a4"></div>
<div class="ab abtn" style="left:429px;top:250.3px;height:10.2px;"></div>
<div class="ab albl" style="left:454.5px;top:251.1px">B</div>
<div class="ab" style="left:421px;top:267.2px;width:8px;height:1px;background:#8a96a4"></div>
<div class="ab abtn" style="left:429px;top:262.6px;height:10.2px;"></div>
<div class="ab albl" style="left:454.5px;top:263.4px">C</div>
<div class="ab" style="left:421px;top:279.2px;width:8px;height:1px;background:#8a96a4"></div>
<div class="ab abtn" style="left:429px;top:274.6px;height:10.2px;"></div>
<div class="ab albl" style="left:454.5px;top:275.4px">D</div>
<svg class="ab" style="left:477.00px;top:231.60px" width="30" height="30"><defs><radialGradient id="kg" cx="0.42" cy="0.38" r="0.6"><stop offset="0" stop-color="#4a4642"/><stop offset="0.7" stop-color="#363230"/><stop offset="1" stop-color="#242220"/></radialGradient></defs><rect x="5.34" y="23.16" width="1.5" height="1.5" fill="#6690b8"/><rect x="2.61" y="19.07" width="1.5" height="1.5" fill="#6690b8"/><rect x="1.65" y="14.25" width="1.5" height="1.5" fill="#6690b8"/><rect x="2.61" y="9.43" width="1.5" height="1.5" fill="#6690b8"/><rect x="5.34" y="5.34" width="1.5" height="1.5" fill="#6690b8"/><rect x="9.43" y="2.61" width="1.5" height="1.5" fill="#6690b8"/><rect x="14.25" y="1.65" width="1.5" height="1.5" fill="#6690b8"/><rect x="19.07" y="2.61" width="1.5" height="1.5" fill="#6690b8"/><rect x="23.16" y="5.34" width="1.5" height="1.5" fill="#6690b8"/><rect x="25.89" y="9.43" width="1.5" height="1.5" fill="#6690b8"/><rect x="26.85" y="14.25" width="1.5" height="1.5" fill="#6690b8"/><rect x="25.89" y="19.07" width="1.5" height="1.5" fill="#6690b8"/><rect x="23.16" y="23.16" width="1.5" height="1.5" fill="#6690b8"/><circle cx="16.5" cy="17.0" r="10.1" fill="rgba(10,25,40,0.45)"/><circle cx="15.0" cy="15.0" r="9.6" fill="#121212"/><circle cx="14.7" cy="14.7" r="7.8" fill="url(#kg)"/><line x1="17.87" y1="17.01" x2="21.55" y2="19.59" stroke="#d4d4d4" stroke-width="1.8" stroke-linecap="round"/></svg>
<div class="ab" style="left:503px;top:246.1px;width:4px;height:1.5px;background:#dde"></div>
<div class="ab pdisp" style="left:507px;top:237px"><div class="ab pdin">Tone</div></div>
<svg class="ab" style="left:477.00px;top:261.50px" width="30" height="30"><defs><radialGradient id="kg" cx="0.42" cy="0.38" r="0.6"><stop offset="0" stop-color="#4a4642"/><stop offset="0.7" stop-color="#363230"/><stop offset="1" stop-color="#242220"/></radialGradient></defs><rect x="5.34" y="23.16" width="1.5" height="1.5" fill="#6690b8"/><rect x="2.61" y="19.07" width="1.5" height="1.5" fill="#6690b8"/><rect x="1.65" y="14.25" width="1.5" height="1.5" fill="#6690b8"/><rect x="2.61" y="9.43" width="1.5" height="1.5" fill="#6690b8"/><rect x="5.34" y="5.34" width="1.5" height="1.5" fill="#6690b8"/><rect x="9.43" y="2.61" width="1.5" height="1.5" fill="#6690b8"/><rect x="14.25" y="1.65" width="1.5" height="1.5" fill="#6690b8"/><rect x="19.07" y="2.61" width="1.5" height="1.5" fill="#6690b8"/><rect x="23.16" y="5.34" width="1.5" height="1.5" fill="#6690b8"/><rect x="25.89" y="9.43" width="1.5" height="1.5" fill="#6690b8"/><rect x="26.85" y="14.25" width="1.5" height="1.5" fill="#6690b8"/><rect x="25.89" y="19.07" width="1.5" height="1.5" fill="#6690b8"/><rect x="23.16" y="23.16" width="1.5" height="1.5" fill="#6690b8"/><circle cx="16.5" cy="17.0" r="10.1" fill="rgba(10,25,40,0.45)"/><circle cx="15.0" cy="15.0" r="9.6" fill="#121212"/><circle cx="14.7" cy="14.7" r="7.8" fill="url(#kg)"/><line x1="16.75" y1="11.97" x2="19.00" y2="8.07" stroke="#d4d4d4" stroke-width="1.8" stroke-linecap="round"/></svg>
<div class="ab" style="left:503px;top:276.0px;width:4px;height:1.5px;background:#dde"></div>
<div class="ab pdisp" style="left:507px;top:267px"><div class="ab pdin">Release</div></div>
<svg class="ab" style="left:601.20px;top:237.00px" width="46" height="46"><defs><radialGradient id="kg" cx="0.42" cy="0.38" r="0.6"><stop offset="0" stop-color="#4a4642"/><stop offset="0.7" stop-color="#363230"/><stop offset="1" stop-color="#242220"/></radialGradient></defs><rect x="8.35" y="35.65" width="2" height="2" fill="#6a9cc4"/><rect x="4.17" y="29.39" width="2" height="2" fill="#6a9cc4"/><rect x="2.70" y="22.00" width="2" height="2" fill="#6a9cc4"/><rect x="4.17" y="14.61" width="2" height="2" fill="#6a9cc4"/><rect x="8.35" y="8.35" width="2" height="2" fill="#6a9cc4"/><rect x="14.61" y="4.17" width="2" height="2" fill="#6a9cc4"/><rect x="22.00" y="2.70" width="2" height="2" fill="#6a9cc4"/><rect x="29.39" y="4.17" width="2" height="2" fill="#6a9cc4"/><rect x="35.65" y="8.35" width="2" height="2" fill="#6a9cc4"/><rect x="39.83" y="14.61" width="2" height="2" fill="#6a9cc4"/><rect x="41.30" y="22.00" width="2" height="2" fill="#6a9cc4"/><rect x="39.83" y="29.39" width="2" height="2" fill="#6a9cc4"/><rect x="35.65" y="35.65" width="2" height="2" fill="#6a9cc4"/><circle cx="24.5" cy="25.0" r="16.3" fill="rgba(10,25,40,0.45)"/><circle cx="23.0" cy="23.0" r="15.8" fill="#121212"/><circle cx="22.7" cy="22.7" r="14.0" fill="url(#kg)"/><line x1="29.28" y1="21.32" x2="37.01" y2="19.25" stroke="#d4d4d4" stroke-width="2" stroke-linecap="round"/></svg>
<div class="ab" style="left:607px;top:278.5px;font-size:7.5px;font-weight:bold;color:#9ab0c6;letter-spacing:0.5px;line-height:8px;transform:scaleX(0.98);transform-origin:0 0">VOLUME</div>
<svg class="ab" style="left:663px;top:232px" width="78" height="13"><path d="M1 0.5H77L76 3L77.5 6L76 9.5L77 12.5H1L2 9L0.5 6L2 3Z" fill="#efebcb"/><text x="39" y="10" text-anchor="middle" font-family="Liberation Sans" font-weight="bold" font-size="8.5" fill="#111" letter-spacing="0.6">ID8 3</text></svg>
<svg class="ab" style="left:662px;top:250px" width="48" height="22"><rect x="1" y="0.7" width="4.3" height="19.2" fill="#d97a2a"/><rect x="10" y="0.7" width="4.3" height="19.2" fill="#d97a2a"/><path d="M16.3 0.7H19.5A7.7 9.6 0 0 1 19.5 19.9H16.3V15.6H19.3A3.4 5.3 0 0 0 19.3 5H16.3Z" fill="#d97a2a"/><path fill-rule="evenodd" d="M31.5 5.6A7.1 4.9 0 1 0 45.7 5.6A7.1 4.9 0 1 0 31.5 5.6Z M36 7A2.6 2.1 0 1 0 41.2 7A2.6 2.1 0 1 0 36 7Z" fill="#a6c064"/><path fill-rule="evenodd" d="M31.1 15A7.5 4.9 0 1 0 46.1 15A7.5 4.9 0 1 0 31.1 15Z M35.6 15A3 2.4 0 1 0 41.6 15A3 2.4 0 1 0 35.6 15Z" fill="#a6c064"/><rect x="38" y="0" width="1.2" height="21" fill="#3a5f86"/></svg>
<div class="ab idev" style="left:663px;top:271.5px">instrument device</div>
<div class="ab" style="left:7px;top:29px;width:20px;height:32px;background:linear-gradient(90deg,#2a80b0,#22c2f2 18%,#22c2f2)"></div>
<svg class="ab" style="left:0;top:27px" width="40" height="36"><path d="M10.7 10.5H18.7L23 17.5L18.7 24.5H10.7Z" fill="#1a2430"/><path d="M12 11.8H18L21.5 17.5L18 23.2H12Z" fill="#f2f2f2"/><path d="M13.2 12.8H16.2Q19 12.8 19 17.5Q19 22.2 16.2 22.2H13.2Z" fill="#2ee050"/><circle cx="16.5" cy="17.3" r="14.6" fill="none" stroke="#f4ea0c" stroke-width="2"/></svg>
<div class="ab" style="left:25px;top:294.5px;width:753px;height:2.5px;background:#16202c"></div>
<div class="ab" style="left:3px;top:297px;width:780px;height:2px;background:#86b4d8"></div>
<div class="ab" style="left:3px;top:299px;width:780px;height:1px;background:#1a1a1a"></div>
<div class="ab" style="left:3px;top:300px;width:780px;height:19px;background:#9a9a9a"></div>
<div class="ab" style="left:4px;top:319px;width:779px;height:42px;background:#ebebe6"></div>
<div class="ab" style="left:3px;top:300px;width:1px;height:260px;background:#111"></div>
<div class="ab" style="left:4px;top:361px;width:779px;height:1px;background:#222"></div>
<svg class="ab" style="left:6px;top:302px" width="16" height="16"><path d="M1 8A7 7 0 0 1 15 8Z" fill="#6a6a6a"/><path d="M1 8A7 7 0 0 0 15 8Z" fill="#dcdcdc"/></svg>
<div class="ab" style="left:34.5px;top:298.5px;font-size:15.4px;color:#f6f6f6;line-height:19px">Sequencer</div>
<div class="ab" style="left:14px;top:328px;width:24px;height:24px;background:#6b6b6b"></div>
<svg class="ab" style="left:14px;top:328px" width="24" height="24"><path d="M8 5.2V17.8L10.6 15.3L13.4 20.2L15.3 19.2L12.6 14.4H16.3Z" fill="#fff"/></svg>
<svg class="ab" style="left:44px;top:328px" width="20" height="24"><path d="M5.5 19.6L5.4 14.1L9.4 4.9Q11.5 3 13.6 6.7L9.6 15.9Z M8.4 7.4L12.6 9.2" fill="none" stroke="#6a6a6a" stroke-width="1.3" stroke-linejoin="round"/><path d="M5.5 19.6L5.4 15.6L8 16.8Z" fill="#6a6a6a"/></svg>
<svg class="ab" style="left:70px;top:330px" width="20" height="20"><path d="M2.2 12.4L9.6 5.4H16.9L9.6 12.4Z M2.2 12.4V15.5H9.6L16.9 8.6V5.4 M9.6 12.4V15.5" fill="none" stroke="#6a6a6a" stroke-width="1.3" stroke-linejoin="round"/></svg>
<svg class="ab" style="left:95px;top:328px" width="22" height="22"><path d="M10.5 4.1L19.7 13.5L17.5 15.7L17.2 17.1L15.7 17.4L13.5 19.7L4.1 10.3L6.3 8.1L6.6 6.7L8.1 6.4Z" fill="none" stroke="#6a6a6a" stroke-width="1.3" stroke-linejoin="round"/><path d="M10.2 6.5L17.4 13.8" stroke="#6a6a6a" stroke-width="1.1"/><rect x="10.3" y="11.4" width="2" height="2" fill="#7a7a7a"/></svg>
<svg class="ab" style="left:125px;top:330px" width="18" height="20"><path d="M4 2.5H13.6Q15.2 2.5 15.2 4.1V10.9Q15.2 12.5 13.6 12.5H6.5L2.5 16.8V4.1Q2.5 2.5 4 2.5Z" fill="none" stroke="#6a6a6a" stroke-width="1.3" stroke-linejoin="round"/><path d="M2 12L2 17.2L6.4 12.5Z" fill="#6a6a6a"/><path d="M5.2 10.5V5L8.8 8.6L12.4 5V10.5" fill="none" stroke="#6a6a6a" stroke-width="1.4"/></svg>
<svg class="ab" style="left:150px;top:329px" width="22" height="22"><circle cx="9.4" cy="8.2" r="5.4" fill="#dcdcd8" stroke="#6a6a6a" stroke-width="1.5"/><path d="M13.2 12L17.6 16.8" stroke="#6a6a6a" stroke-width="2.3" stroke-linecap="round"/></svg>
<svg class="ab" style="left:178px;top:330px" width="22" height="20"><path d="M6.5 18C5.5 16.3 3.5 14.3 2.3 12C1.8 10.8 3 10 4.3 11L6.2 12.6L5.6 5.3C5.5 4 7.3 3.8 7.6 5L8.5 9.3L8.6 3.6C8.7 2.3 10.6 2.3 10.7 3.6L11.1 9.2L12.2 4.2C12.5 3 14.2 3.2 14.1 4.4L13.8 9.6L15.3 6.3C15.8 5.3 17.3 5.8 17.1 6.9L16.2 12C15.8 14.5 15.4 16.2 15.6 18Z" fill="#dcdcd8" stroke="#6a6a6a" stroke-width="1.2" stroke-linejoin="round"/></svg>
<div class="ab" style="left:208px;top:300px;width:9px;height:19px;background:#8a8a8a"></div>
<div class="ab" style="left:217px;top:300px;width:9px;height:19px;background:#c2c2c2"></div>
<div class="ab" style="left:208px;top:319px;width:9px;height:42px;background:#dcdcd8"></div>
<div class="ab" style="left:217px;top:319px;width:9px;height:42px;background:#f8f8f6"></div>
<svg class="ab" style="left:208px;top:299px" width="18" height="4"><path d="M0 0H18L13 3H5Z" fill="#111"/></svg>
<svg class="ab" style="left:208px;top:358px" width="18" height="4"><path d="M0 4H18L13 0.5H5Z" fill="#111"/></svg>
<div class="ab" style="left:277px;top:300px;width:9px;height:19px;background:#8a8a8a"></div>
<div class="ab" style="left:286px;top:300px;width:9px;height:19px;background:#c2c2c2"></div>
<div class="ab" style="left:277px;top:319px;width:9px;height:42px;background:#dcdcd8"></div>
<div class="ab" style="left:286px;top:319px;width:9px;height:42px;background:#f8f8f6"></div>
<svg class="ab" style="left:277px;top:299px" width="18" height="4"><path d="M0 0H18L13 3H5Z" fill="#111"/></svg>
<svg class="ab" style="left:277px;top:358px" width="18" height="4"><path d="M0 4H18L13 0.5H5Z" fill="#111"/></svg>
<div class="ab" style="left:234px;top:330px;width:35px;height:20px;border:1px solid #6a6a6a;font-size:7px;font-weight:bold;color:#6a6a6a;text-align:center;line-height:8.5px;padding-top:1px">EDIT<br>MODE</div>
<div class="ab" style="left:307px;top:331px;width:35px;height:20px;background:#6b6b6b;font-size:7px;font-weight:bold;color:#eee;text-align:center;line-height:20px">SNAP</div>
<div class="ab" style="left:364px;top:332.5px;font-size:16px;font-weight:bold;color:#5c5c5c;line-height:18px">Bar</div>
<svg class="ab" style="left:397px;top:338px" width="10" height="6"><path d="M1 1H9L5 5Z" fill="#666"/></svg>
<div class="ab" style="left:413px;top:324px;width:1px;height:34px;background:#aaa"></div>
<div class="ab" style="left:4px;top:362px;width:284px;height:198px;background:#ebebe6"></div>
<div class="ab" style="left:4px;top:392px;width:284px;height:1px;background:#b8b8b4"></div>
<div class="ab" style="left:20px;top:373px;font-size:7px;font-weight:bold;color:#6a7078;letter-spacing:0.2px">MANUAL REC</div>
<div class="ab" style="left:79px;top:366px;width:1px;height:23px;background:#b0b0b0"></div>
<div class="ab" style="left:120px;top:366px;width:1px;height:23px;background:#b0b0b0"></div>
<div class="ab trkM" style="left:83.3px;top:370px;color:#8a8a8a">M</div>
<div class="ab trkM" style="left:104px;top:370px;color:#8a8a8a">S</div>
<svg class="ab" style="left:185px;top:369px" width="17" height="17"><circle cx="8.3" cy="8.5" r="7.6" fill="#6e6e6e"/><path d="M8.3 4V13M3.8 8.5H12.8" stroke="#fff" stroke-width="2.6"/></svg>
<svg class="ab" style="left:213px;top:371px" width="30" height="12"><path d="M3.4 5.3L6.6 9.5L10.4 3.1L14 9.5" fill="none" stroke="#666" stroke-width="1.5"/><rect x="2" y="4" width="3" height="3" fill="#666"/><rect x="5" y="8" width="3" height="3" fill="#666"/><rect x="9" y="2" width="3" height="3" fill="#666"/><rect x="12.5" y="8" width="3" height="3" fill="#666"/><path d="M22 4H28L25 8Z" fill="#666"/></svg>
<svg class="ab" style="left:259px;top:373px" width="10" height="10"><rect x="0.5" y="0.5" width="8" height="8" fill="none" stroke="#aaa"/><path d="M4.5 0V9M0 4.5H9" stroke="#aaa"/></svg>
<div class="ab" style="left:12px;top:401px;width:50px;height:19px;background:#cacac6;font-size:7px;font-weight:bold;color:#777;text-align:center;line-height:19px">BLOCK</div>
<div class="ab" style="left:62px;top:401px;width:50px;height:19px;background:#6a6a6a;font-size:7px;font-weight:bold;color:#ddd;text-align:center;line-height:19px">SONG</div>
<div class="ab trkM" style="left:245.8px;top:403.5px;color:#8a8a88">M</div>
<div class="ab" style="left:4px;top:431px;width:284px;height:5px;background:#c4c4c0"></div>
<div class="ab" style="left:4px;top:436px;width:284px;height:124px;background:#fff"></div>
<div class="ab" style="left:4px;top:436px;width:77px;height:3px;background:#8ab4c8"></div>
<div class="ab" style="left:5px;top:443px;width:13px;height:37.5px;background:#7a4a12"></div>
<svg class="ab" style="left:18px;top:443px" width="63" height="38"><path d="M0 0H15L23 9H63V37.5H0Z" fill="#f39a1e"/></svg>
<svg class="ab" style="left:7px;top:446px" width="10" height="8"><path d="M1 1H9L5 7Z" fill="#dccbb2"/></svg>
<div class="ab" style="left:41px;top:440.5px;font-size:10.5px;color:#555;line-height:13px">ID8 1</div>
<div class="ab" style="left:81px;top:452px;width:207px;height:28.5px;background:#a8a4a0"></div>
<div class="ab" style="left:38px;top:454px;width:40px;height:7px;background:#111;padding:1px"><div style="width:100%;height:100%;background:linear-gradient(90deg,#2a4a60 0,#3a6a88 15%,#2aa8e8 20%,#30b0f0 45%,#2a4a60 50%,#3a7090 60%,#2aa0d8 70%,#304050 80%,#6a7a60 90%,#2a3a48)"></div></div>
<svg class="ab" style="left:16px;top:447px" width="34" height="34"><path d="M8 7.4H24L29.2 15.5L24 23.6H8Z" fill="#111"/><path d="M9.2 8.6H23.4L27.8 15.5L23.4 22.4H9.2Z" fill="#f4f4f4"/><path d="M10.5 9.8H22.7L26.3 15.5L22.7 21.2H10.5Z" fill="#6a6a6a"/><rect x="10.5" y="9.8" width="5.8" height="11.4" fill="#22e040"/><circle cx="16.6" cy="16" r="14.8" fill="none" stroke="#f5e010" stroke-width="2"/></svg>
<div class="ab trkM" style="left:83.7px;top:454.8px;color:#5e5c5a">M</div>
<div class="ab trkM" style="left:104px;top:454.8px;color:#5e5c5a">S</div>
<svg class="ab" style="left:119px;top:453px" width="18" height="18"><circle cx="9.6" cy="8.7" r="7.9" fill="#e8000c"/><path d="M5.4 6.2L8.4 12.2L11.4 5L13.6 10" fill="none" stroke="#fff" stroke-width="1.5"/><rect x="4" y="4.8" width="2.8" height="2.8" fill="#fff"/><rect x="7" y="10.8" width="2.8" height="2.8" fill="#fff"/><rect x="10" y="3.6" width="2.8" height="2.8" fill="#fff"/><rect x="12.2" y="8.6" width="2.8" height="2.8" fill="#fff"/></svg>
<div class="ab" style="left:145px;top:452px;width:14px;height:28.5px;background:#8a5010"></div>
<svg class="ab" style="left:163px;top:453px" width="18" height="18"><circle cx="8.7" cy="8.5" r="7.5" fill="#e00010"/><circle cx="8.7" cy="8.5" r="3.6" fill="#fff"/></svg>
<div class="ab" style="left:186px;top:462px;width:11px;height:1.5px;background:#555"></div>
<svg class="ab" style="left:227px;top:459px" width="9" height="6"><path d="M0.5 0.5H8.5L4.5 4.5Z" fill="#555"/></svg>
<div class="ab trkM" style="left:252px;top:454.8px;color:#5e5c5a">M</div>
<svg class="ab" style="left:272px;top:457px" width="11" height="10"><path d="M1.5 1.2L9.5 8.8M9.5 1.2L1.5 8.8" stroke="#5e5c5a" stroke-width="2.4"/></svg>
<svg class="ab" style="left:5px;top:485px" width="76" height="38"><path d="M0 0H28L36 9H76V37.5H0Z" fill="#f5b82a"/></svg>
<svg class="ab" style="left:7px;top:488px" width="10" height="8"><path d="M1 1H9L5 7Z" fill="#6a5418"/></svg>
<div class="ab" style="left:41px;top:482.5px;font-size:10.5px;color:#555;line-height:13px">ID8 2</div>
<div class="ab" style="left:81px;top:494px;width:207px;height:28.5px;background:#d6d3cf"></div>
<div class="ab" style="left:38px;top:496px;width:40px;height:7px;background:#111;padding:1px"><div style="width:100%;height:100%;background:linear-gradient(90deg,#2a4a60 0,#3a6a88 15%,#2aa8e8 20%,#30b0f0 45%,#2a4a60 50%,#3a7090 60%,#2aa0d8 70%,#304050 80%,#6a7a60 90%,#2a3a48)"></div></div>
<div class="ab" style="left:24px;top:496px;width:15px;height:7px;background:#111;padding:1px"><div style="width:100%;height:100%;background:linear-gradient(90deg,#2a4a60,#3a6a88 40%,#2aa8e8 60%,#30b0f0)"></div></div>
<div class="ab trkM" style="left:83.7px;top:496.8px;color:#8e8c8a">M</div>
<div class="ab trkM" style="left:104px;top:496.8px;color:#8e8c8a">S</div>
<svg class="ab" style="left:119px;top:495px" width="18" height="18"><path d="M5.4 6.2L8.4 12.2L11.4 5L13.6 10" fill="none" stroke="#6e6c6a" stroke-width="1.5"/><rect x="4" y="4.8" width="2.8" height="2.8" fill="#6e6c6a"/><rect x="7" y="10.8" width="2.8" height="2.8" fill="#6e6c6a"/><rect x="10" y="3.6" width="2.8" height="2.8" fill="#6e6c6a"/><rect x="12.2" y="8.6" width="2.8" height="2.8" fill="#6e6c6a"/></svg>
<div class="ab" style="left:145px;top:494px;width:14px;height:28.5px;background:#f5b82a"></div>
<svg class="ab" style="left:163px;top:495px" width="18" height="18"><circle cx="8" cy="8.5" r="6.8" fill="none" stroke="#d68088" stroke-width="1.2"/><circle cx="8" cy="8.5" r="3.6" fill="#d87880"/></svg>
<div class="ab" style="left:186px;top:504px;width:11px;height:1.5px;background:#666"></div>
<svg class="ab" style="left:227px;top:501px" width="9" height="6"><path d="M0.5 0.5H8.5L4.5 4.5Z" fill="#555"/></svg>
<div class="ab trkM" style="left:252px;top:496.8px;color:#8e8c8a">M</div>
<svg class="ab" style="left:272px;top:499px" width="11" height="10"><path d="M1.5 1.2L9.5 8.8M9.5 1.2L1.5 8.8" stroke="#8e8c8a" stroke-width="2.4"/></svg>
<svg class="ab" style="left:5px;top:527px" width="76" height="38"><path d="M0 0H28L36 9H76V37.5H0Z" fill="#f6e51f"/></svg>
<svg class="ab" style="left:7px;top:530px" width="10" height="8"><path d="M1 1H9L5 7Z" fill="#6a5418"/></svg>
<div class="ab" style="left:41px;top:524.5px;font-size:10.5px;color:#555;line-height:13px">ID8 3</div>
<div class="ab" style="left:81px;top:536px;width:207px;height:28.5px;background:#d6d3cf"></div>
<div class="ab" style="left:38px;top:538px;width:40px;height:7px;background:#111;padding:1px"><div style="width:100%;height:100%;background:linear-gradient(90deg,#2a4a60 0,#3a6a88 15%,#2aa8e8 20%,#30b0f0 45%,#2a4a60 50%,#3a7090 60%,#2aa0d8 70%,#304050 80%,#6a7a60 90%,#2a3a48)"></div></div>
<div class="ab" style="left:24px;top:538px;width:15px;height:7px;background:#111;padding:1px"><div style="width:100%;height:100%;background:linear-gradient(90deg,#2a4a60,#3a6a88 40%,#2aa8e8 60%,#30b0f0)"></div></div>
<div class="ab trkM" style="left:83.7px;top:538.8px;color:#8e8c8a">M</div>
<div class="ab trkM" style="left:104px;top:538.8px;color:#8e8c8a">S</div>
<svg class="ab" style="left:119px;top:537px" width="18" height="18"><path d="M5.4 6.2L8.4 12.2L11.4 5L13.6 10" fill="none" stroke="#6e6c6a" stroke-width="1.5"/><rect x="4" y="4.8" width="2.8" height="2.8" fill="#6e6c6a"/><rect x="7" y="10.8" width="2.8" height="2.8" fill="#6e6c6a"/><rect x="10" y="3.6" width="2.8" height="2.8" fill="#6e6c6a"/><rect x="12.2" y="8.6" width="2.8" height="2.8" fill="#6e6c6a"/></svg>
<div class="ab" style="left:145px;top:536px;width:14px;height:28.5px;background:#f6e51f"></div>
<svg class="ab" style="left:163px;top:537px" width="18" height="18"><circle cx="8" cy="8.5" r="6.8" fill="none" stroke="#d68088" stroke-width="1.2"/><circle cx="8" cy="8.5" r="3.6" fill="#d87880"/></svg>
<div class="ab" style="left:186px;top:546px;width:11px;height:1.5px;background:#666"></div>
<svg class="ab" style="left:227px;top:543px" width="9" height="6"><path d="M0.5 0.5H8.5L4.5 4.5Z" fill="#555"/></svg>
<div class="ab trkM" style="left:252px;top:538.8px;color:#8e8c8a">M</div>
<svg class="ab" style="left:272px;top:541px" width="11" height="10"><path d="M1.5 1.2L9.5 8.8M9.5 1.2L1.5 8.8" stroke="#8e8c8a" stroke-width="2.4"/></svg>
<div class="ab" style="left:297px;top:362px;width:486px;height:30px;background:linear-gradient(#dcdcd8,#ebebe6 20%,#ebebe6)"></div>
<div class="ab" style="left:297px;top:392px;width:486px;height:1px;background:#8a8a8a"></div>
<div class="ab" style="left:297px;top:393px;width:486px;height:35px;background:#d6d6d6"></div>
<div class="ab" style="left:297px;top:428px;width:486px;height:3px;background:#ececec"></div>
<div class="ab" style="left:297px;top:431px;width:486px;height:5px;background:#bdbdbd"></div>
<div class="ab" style="left:297px;top:436px;width:486px;height:4px;background:#d2d2d2"></div>
<div class="ab" style="left:297px;top:440px;width:486px;height:12px;background:#ececec"></div>
<div class="ab" style="left:297px;top:452px;width:486px;height:29px;background:#c0c0c0"></div>
<div class="ab" style="left:297px;top:481px;width:486px;height:13px;background:#ececec"></div>
<div class="ab" style="left:297px;top:494px;width:486px;height:29px;background:#d6d6d6"></div>
<div class="ab" style="left:297px;top:523px;width:486px;height:13px;background:#ececec"></div>
<div class="ab" style="left:297px;top:536px;width:486px;height:24px;background:#d6d6d6"></div>
<svg class="ab" style="left:297px;top:362px" width="486" height="31"><rect x="12.4" y="27" width="1" height="3" fill="#888"/><rect x="25.5" y="25" width="1" height="5" fill="#888"/><rect x="38.7" y="27" width="1" height="3" fill="#888"/><rect x="51.9" y="25" width="1" height="5" fill="#888"/><rect x="65.0" y="27" width="1" height="3" fill="#888"/><rect x="78.2" y="25" width="1" height="5" fill="#888"/><rect x="91.4" y="27" width="1" height="3" fill="#888"/><rect x="104.5" y="0" width="1" height="30" fill="#888"/><rect x="117.7" y="27" width="1" height="3" fill="#888"/><rect x="130.9" y="25" width="1" height="5" fill="#888"/><rect x="144.0" y="27" width="1" height="3" fill="#888"/><rect x="157.2" y="25" width="1" height="5" fill="#888"/><rect x="170.4" y="27" width="1" height="3" fill="#888"/><rect x="183.5" y="25" width="1" height="5" fill="#888"/><rect x="196.7" y="27" width="1" height="3" fill="#888"/><rect x="209.9" y="0" width="1" height="30" fill="#888"/><rect x="223.0" y="27" width="1" height="3" fill="#888"/><rect x="236.2" y="25" width="1" height="5" fill="#888"/><rect x="249.4" y="27" width="1" height="3" fill="#888"/><rect x="262.5" y="25" width="1" height="5" fill="#888"/><rect x="275.7" y="27" width="1" height="3" fill="#888"/><rect x="288.9" y="25" width="1" height="5" fill="#888"/><rect x="302.0" y="27" width="1" height="3" fill="#888"/><rect x="315.2" y="0" width="1" height="30" fill="#888"/><rect x="328.4" y="27" width="1" height="3" fill="#888"/><rect x="341.5" y="25" width="1" height="5" fill="#888"/><rect x="354.7" y="27" width="1" height="3" fill="#888"/><rect x="367.9" y="25" width="1" height="5" fill="#888"/><rect x="381.0" y="27" width="1" height="3" fill="#888"/><rect x="394.2" y="25" width="1" height="5" fill="#888"/><rect x="407.4" y="27" width="1" height="3" fill="#888"/><rect x="420.5" y="0" width="1" height="30" fill="#888"/><rect x="433.7" y="27" width="1" height="3" fill="#888"/><rect x="446.9" y="25" width="1" height="5" fill="#888"/><rect x="460.0" y="27" width="1" height="3" fill="#888"/><rect x="473.2" y="25" width="1" height="5" fill="#888"/><rect x="486.4" y="27" width="1" height="3" fill="#888"/><rect x="499.5" y="25" width="1" height="5" fill="#888"/><rect x="512.7" y="27" width="1" height="3" fill="#888"/></svg>
<div class="ab" style="left:403.5px;top:363px;font-size:11px;color:#555">2</div>
<div class="ab" style="left:401.5px;top:393px;width:1.5px;height:167px;background:#f8f8f8"></div>
<div class="ab" style="left:508.9px;top:363px;font-size:11px;color:#555">3</div>
<div class="ab" style="left:506.9px;top:393px;width:1.5px;height:167px;background:#f8f8f8"></div>
<div class="ab" style="left:614.2px;top:363px;font-size:11px;color:#555">4</div>
<div class="ab" style="left:612.2px;top:393px;width:1.5px;height:167px;background:#f8f8f8"></div>
<div class="ab" style="left:719.5px;top:363px;font-size:11px;color:#555">5</div>
<div class="ab" style="left:717.5px;top:393px;width:1.5px;height:167px;background:#f8f8f8"></div>
<div class="ab" style="left:297px;top:552px;width:486px;height:8px;background:linear-gradient(rgba(0,0,0,0),rgba(0,0,0,0.06))"></div>
<div class="ab" style="left:288px;top:362px;width:9px;height:198px;background:linear-gradient(90deg,#9a9a9a,#c8c8c8 40%,#d8d8d8)"></div>
<div class="ab" style="left:296px;top:381px;width:1px;height:179px;background:#333"></div>
<svg class="ab" style="left:289px;top:363px" width="22" height="30"><path d="M7.5 2.5H16.5L19.5 7.5L16.5 12.5H7.5Z" fill="#f4f4f4" stroke="#333" stroke-width="1"/><path d="M10 4.5V10.5H14" fill="none" stroke="#333" stroke-width="1.3"/><path d="M1.5 14.5H12.5V22L7 27.5L1.5 22Z" fill="#d8d8d8" stroke="#333" stroke-width="1"/><text x="15.5" y="19" font-size="7" fill="#777" font-family="Liberation Sans">4</text></svg>
</div></body></html>
